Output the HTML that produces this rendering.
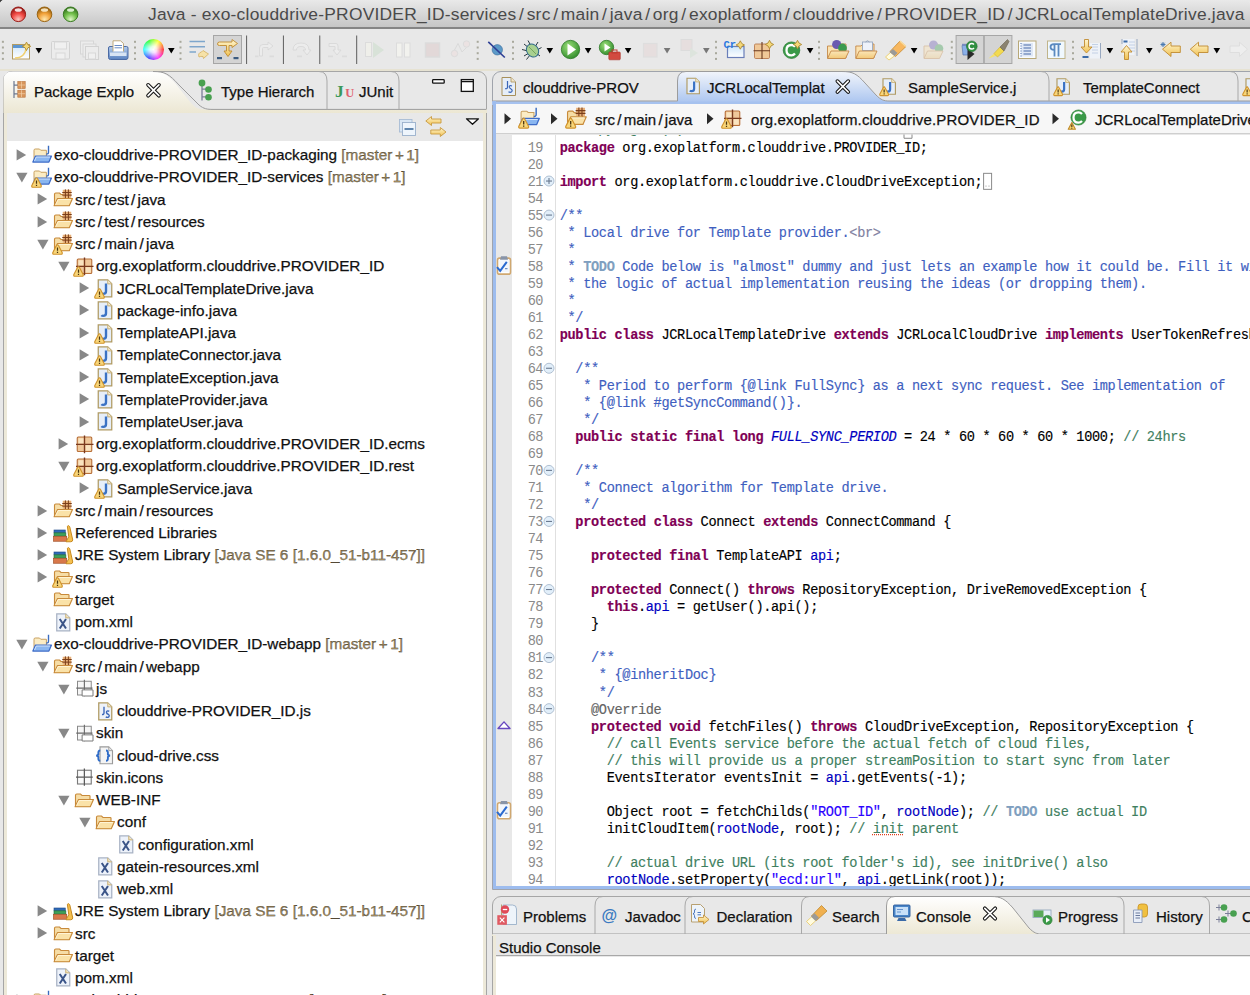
<!DOCTYPE html><html><head><meta charset="utf-8"><title>Eclipse</title><style>
*{margin:0;padding:0;box-sizing:border-box}
html,body{width:1250px;height:995px;overflow:hidden;background:#e8e8e8;font-family:"Liberation Sans",sans-serif;position:relative}
.abs{position:absolute}
svg{position:absolute;overflow:visible}
#title{left:0;top:0;width:1250px;height:29px;background:linear-gradient(#e9e9e9,#c6c6c6);border-bottom:2px solid #858585;border-radius:5px 5px 0 0}
#titletext{left:148px;top:4px;font-size:17.4px;color:#4a4a4a;white-space:nowrap;letter-spacing:0.235px}
.light{border-radius:50%}
.tree{font-size:15.3px;color:#111;-webkit-text-stroke:0.25px #111;white-space:pre;line-height:22px;height:22px}
.deco{color:#a08a5e}
.code{font-family:"Liberation Mono",monospace;font-size:13.6px;letter-spacing:-0.33px;-webkit-text-stroke:0.15px currentColor;transform:scaleY(1.08);transform-origin:0 70%;white-space:pre;color:#000;line-height:17px;height:17px}
.ln{font-family:"Liberation Mono",monospace;font-size:13.6px;letter-spacing:-0.5px;color:#8a8a8a;transform:scaleY(1.1);transform-origin:0 70%;text-align:right;width:50px;white-space:pre;line-height:17px;height:17px}
.k{color:#7f0055;font-weight:bold}
.jd{color:#3f5fbf}
.br{color:#7f7f9f}
.td{color:#7f9fbf;font-weight:bold}
.cm{color:#3f7f5f}
.st{color:#2a00ff}
.fd{color:#0000c0}
.sf{color:#0000c0;font-style:italic}
.an{color:#646464}
.sq{color:#3f7f5f;text-decoration:underline dotted #e04020}
.sl{margin:0 2.25px}
.tsl{margin:0 2.6px}
.tabt{font-size:15px;color:#111;-webkit-text-stroke:0.25px #111;white-space:nowrap;line-height:20px;transform:translateY(0.8px)}
</style></head><body><div id="title" class="abs"></div><svg style="left:0;top:0" width="100" height="29" viewBox="0 0 100 29"><defs><radialGradient id="L18" cx="0.5" cy="0.85" r="0.75"><stop offset="0" stop-color="#f8c8c0"/><stop offset="0.55" stop-color="#f24a44"/><stop offset="1" stop-color="#9a1c18"/></radialGradient></defs><circle cx="18.3" cy="14.3" r="7.3" fill="url(#L18)" stroke="#9a1c18" stroke-width="1"/><ellipse cx="18.3" cy="10.0" rx="3.6" ry="1.8" fill="#ffffff" opacity="0.85"/></svg><svg style="left:0;top:0" width="100" height="29" viewBox="0 0 100 29"><defs><radialGradient id="L44" cx="0.5" cy="0.85" r="0.75"><stop offset="0" stop-color="#fde8b0"/><stop offset="0.55" stop-color="#f2a23a"/><stop offset="1" stop-color="#9a6412"/></radialGradient></defs><circle cx="44.5" cy="14.3" r="7.3" fill="url(#L44)" stroke="#9a6412" stroke-width="1"/><ellipse cx="44.5" cy="10.0" rx="3.6" ry="1.8" fill="#fff4d8" opacity="0.85"/></svg><svg style="left:0;top:0" width="100" height="29" viewBox="0 0 100 29"><defs><radialGradient id="L70" cx="0.5" cy="0.85" r="0.75"><stop offset="0" stop-color="#e0f6c8"/><stop offset="0.55" stop-color="#72c04a"/><stop offset="1" stop-color="#3a7a22"/></radialGradient></defs><circle cx="70.6" cy="14.3" r="7.3" fill="url(#L70)" stroke="#3a7a22" stroke-width="1"/><ellipse cx="70.6" cy="10.0" rx="3.6" ry="1.8" fill="#f0ffe8" opacity="0.85"/></svg><div class="abs" style="left:0;top:0;width:3px;height:3px;background:radial-gradient(circle at 100% 100%, transparent 2.5px, #3a3a3a 3px)"></div><div id="titletext" class="abs">Java - exo-clouddrive-PROVIDER_ID-services<span class="tsl">/</span>src<span class="tsl">/</span>main<span class="tsl">/</span>java<span class="tsl">/</span>org<span class="tsl">/</span>exoplatform<span class="tsl">/</span>clouddrive<span class="tsl">/</span>PROVIDER_ID<span class="tsl">/</span>JCRLocalTemplateDrive.java</div><svg style="left:0;top:29px" width="1250" height="42" viewBox="0 29 1250 42"><defs><linearGradient id="tbw" x1="0" y1="0" x2="0" y2="1"><stop offset="0" stop-color="#cfe6fa"/><stop offset="1" stop-color="#ffffff"/></linearGradient><linearGradient id="tby" x1="0" y1="0" x2="0" y2="1"><stop offset="0" stop-color="#fff6d0"/><stop offset="1" stop-color="#f0c050"/></linearGradient><linearGradient id="tbf" x1="0" y1="0" x2="0" y2="1"><stop offset="0" stop-color="#fbe6b8"/><stop offset="1" stop-color="#f2c979"/></linearGradient><radialGradient id="tbg" cx="0.4" cy="0.35" r="0.7"><stop offset="0" stop-color="#9be07a"/><stop offset="1" stop-color="#2f8a2a"/></radialGradient><linearGradient id="tbb" x1="0" y1="0" x2="0" y2="1"><stop offset="0" stop-color="#b4ccec"/><stop offset="1" stop-color="#5a82c0"/></linearGradient></defs><rect x="1.9" y="40.8" width="2" height="2" fill="#a8a89c"/><rect x="1.9" y="46.5" width="2" height="2" fill="#a8a89c"/><rect x="1.9" y="52.2" width="2" height="2" fill="#a8a89c"/><rect x="1.9" y="57.9" width="2" height="2" fill="#a8a89c"/><rect x="134" y="40.8" width="2" height="2" fill="#a8a89c"/><rect x="134" y="46.5" width="2" height="2" fill="#a8a89c"/><rect x="134" y="52.2" width="2" height="2" fill="#a8a89c"/><rect x="134" y="57.9" width="2" height="2" fill="#a8a89c"/><rect x="179.5" y="40.8" width="2" height="2" fill="#a8a89c"/><rect x="179.5" y="46.5" width="2" height="2" fill="#a8a89c"/><rect x="179.5" y="52.2" width="2" height="2" fill="#a8a89c"/><rect x="179.5" y="57.9" width="2" height="2" fill="#a8a89c"/><rect x="476.7" y="40.8" width="2" height="2" fill="#a8a89c"/><rect x="476.7" y="46.5" width="2" height="2" fill="#a8a89c"/><rect x="476.7" y="52.2" width="2" height="2" fill="#a8a89c"/><rect x="476.7" y="57.9" width="2" height="2" fill="#a8a89c"/><rect x="512" y="40.8" width="2" height="2" fill="#a8a89c"/><rect x="512" y="46.5" width="2" height="2" fill="#a8a89c"/><rect x="512" y="52.2" width="2" height="2" fill="#a8a89c"/><rect x="512" y="57.9" width="2" height="2" fill="#a8a89c"/><rect x="715" y="40.8" width="2" height="2" fill="#a8a89c"/><rect x="715" y="46.5" width="2" height="2" fill="#a8a89c"/><rect x="715" y="52.2" width="2" height="2" fill="#a8a89c"/><rect x="715" y="57.9" width="2" height="2" fill="#a8a89c"/><rect x="818" y="40.8" width="2" height="2" fill="#a8a89c"/><rect x="818" y="46.5" width="2" height="2" fill="#a8a89c"/><rect x="818" y="52.2" width="2" height="2" fill="#a8a89c"/><rect x="818" y="57.9" width="2" height="2" fill="#a8a89c"/><rect x="950.8" y="40.8" width="2" height="2" fill="#a8a89c"/><rect x="950.8" y="46.5" width="2" height="2" fill="#a8a89c"/><rect x="950.8" y="52.2" width="2" height="2" fill="#a8a89c"/><rect x="950.8" y="57.9" width="2" height="2" fill="#a8a89c"/><rect x="1072" y="40.8" width="2" height="2" fill="#a8a89c"/><rect x="1072" y="46.5" width="2" height="2" fill="#a8a89c"/><rect x="1072" y="52.2" width="2" height="2" fill="#a8a89c"/><rect x="1072" y="57.9" width="2" height="2" fill="#a8a89c"/><rect x="246.0" y="35.5" width="1.1" height="28.5" fill="#6a6a6a"/><rect x="282.9" y="35.5" width="1.1" height="28.5" fill="#6a6a6a"/><rect x="319.2" y="35.5" width="1.1" height="28.5" fill="#6a6a6a"/><rect x="356.1" y="35.5" width="1.1" height="28.5" fill="#6a6a6a"/><rect x="12.5" y="44.5" width="17" height="14.5" fill="url(#tbw)" stroke="#b39c62" stroke-width="1"/><rect x="13" y="45" width="16" height="3" fill="#5d96d2"/><path d="M15 58 Q25 58 26.5 47" fill="none" stroke="#f0d070" stroke-width="1.6"/><path d="M26.5 42.099999999999994 Q27.34 45.459999999999994 30.7 46.3 Q27.34 47.14 26.5 50.5 Q25.66 47.14 22.3 46.3 Q25.66 45.459999999999994 26.5 42.099999999999994Z" fill="#f4d878" stroke="#b08a30" stroke-width="0.9"/><path d="M35.5 48 H42.1 L38.8 53.4 Z" fill="#000"/><rect x="51.5" y="41.5" width="18" height="17.5" rx="1" fill="#ececec" stroke="#d2d2d2"/><rect x="54.5" y="42" width="12" height="7" fill="#f0f0f0" stroke="#d8d8d8"/><rect x="56" y="53" width="9" height="6" fill="#f0f0f0" stroke="#d8d8d8"/><rect x="80.5" y="41" width="13" height="13" fill="#ececec" stroke="#d6d6d6"/><rect x="83" y="44" width="13" height="13" fill="#ececec" stroke="#d6d6d6"/><rect x="85.5" y="46.5" width="13" height="13" fill="#ececec" stroke="#d2d2d2"/><rect x="88.5" y="53" width="7" height="6" fill="#f0f0f0" stroke="#d8d8d8"/><path d="M108.5 48 Q108.5 46.5 110 46.5 H126.5 Q128 46.5 128 48 V57.5 Q128 59.5 126 59.5 H110.5 Q108.5 59.5 108.5 57.5Z" fill="url(#tbb)" stroke="#4a6aa4" stroke-width="1"/><rect x="110" y="52.5" width="16.5" height="3.5" fill="#d8e4f4"/><path d="M113 51.5 V40.8 H120.5 L123.5 43.5 V51.5" fill="#fff" stroke="#b8a070" stroke-width="0.9"/><path d="M114.5 45.5 H122 M114.5 47.8 H122" stroke="#6a8cc4" stroke-width="1"/><path d="M168 48 H174.6 L171.3 53.4 Z" fill="#000"/><path d="M189.5 41.5 H205 M189.5 46.8 H205 M189.5 52 H196" stroke="#7ea6cc" stroke-width="1.6"/><path d="M199 57 Q197.5 53 201.5 52 L203 50.5 L208.5 54 L203.5 58.5 L203 56.5 Q200.5 56 199 57Z" fill="#f6e2a8" stroke="#d4b060" stroke-width="0.8"/><rect x="213.5" y="35.5" width="28" height="28" fill="#d4d4d4" stroke="#a6a6a6" stroke-width="1"/><path d="M217.5 44 Q217.5 42 219.5 42 H232 V39.5 L237.5 43.5 L232 47.5 V45.5 H229 V51 H232 L228 56.5 L224 51 H226.5 V45.5 H219.5 Q217.5 45.5 217.5 44Z" fill="url(#tby)" stroke="#c08a30" stroke-width="0.9"/><rect x="217" y="57" width="5" height="2.2" fill="#3a5a80"/><rect x="233.5" y="57" width="5" height="2.2" fill="#3a5a80"/><path d="M259.5 56 V48 Q259.5 44.5 263 44.5 H268 V42 L273 46 L268 50 V47.5 H263.5 Q262.5 47.5 262.5 48.5 V56Z" fill="#ececec" stroke="#d8d8d8" stroke-width="0.9"/><rect x="255" y="55.5" width="3.5" height="1.8" fill="#dcdcdc"/><rect x="269.5" y="55.5" width="4.5" height="1.8" fill="#dcdcdc"/><path d="M293 50 Q293 43 301 43 Q309 43 309 50 L311 50 L307 55 L303 50 L305.5 50 Q305.5 46.5 301 46.5 Q296.5 46.5 296.5 50Z" fill="#ececec" stroke="#d8d8d8" stroke-width="0.9"/><rect x="297" y="55.5" width="5" height="1.8" fill="#dcdcdc"/><path d="M329 43.5 H336 Q338 43.5 338 46 V50 H341 L337 55 L333 50 H335 V46.5 H329Z" fill="#ececec" stroke="#d8d8d8" stroke-width="0.9"/><rect x="328" y="55.5" width="5" height="1.8" fill="#dcdcdc"/><rect x="342" y="55.5" width="5" height="1.8" fill="#dcdcdc"/><rect x="365.5" y="42.5" width="6" height="14" fill="#efefea" stroke="#dcdcdc"/><path d="M373 42 L384 50 L373 58Z" fill="#d8e2d8"/><rect x="396.5" y="43" width="5.5" height="14" fill="#f2f2ee" stroke="#dcdcdc"/><rect x="404.5" y="43" width="5.5" height="14" fill="#f2f2ee" stroke="#dcdcdc"/><rect x="425.5" y="43" width="14" height="14" fill="#e2d8d8" stroke="#dcdcdc" stroke-width="1.4"/><circle cx="454.5" cy="53.5" r="3.2" fill="#ebe2e2" stroke="#dcdcdc"/><circle cx="466.5" cy="44" r="3.2" fill="#ebe2e2" stroke="#dcdcdc"/><path d="M454.5 50 L458 43.5 L462 52 L466.5 47.5" fill="none" stroke="#dadada" stroke-width="1"/><circle cx="497.3" cy="49.8" r="5.2" fill="#5c9ac8" stroke="#3a6a9a" stroke-width="0.6"/><path d="M488.3 41.8 L504.8 57.5" stroke="#2c3e94" stroke-width="1.6"/><path d="M524 44 L529 48 M522 49.5 L528 51 M524 56 L529 53 M538 42 L535 47 M541.5 47.5 L537 50 M540 56 L536 53 M528 40.5 L531 46 M526.5 59.5 L530 55" stroke="#2a3a40" stroke-width="1"/><ellipse cx="532.5" cy="50.5" rx="5.8" ry="6.8" transform="rotate(-35 532.5 50.5)" fill="#a8d090" stroke="#2f6a8a" stroke-width="1"/><path d="M529 47 L536 54" stroke="#6a9a50" stroke-width="0.8"/><path d="M546.5 48 H553.1 L549.8 53.4 Z" fill="#000"/><circle cx="570.5" cy="49.5" r="9.2" fill="url(#tbg)" stroke="#2f7a2a" stroke-width="0.8"/><path d="M567.5 43.5 L576 49.5 L567.5 55.5Z" fill="#fff"/><path d="M584.8 48 H591.4 L588.0999999999999 53.4 Z" fill="#000"/><circle cx="606.5" cy="47.5" r="7.2" fill="url(#tbg)" stroke="#2f7a2a" stroke-width="0.8"/><path d="M604.5 43.5 L610.5 47.5 L604.5 51.5Z" fill="#fff"/><rect x="608.8" y="52" width="11.5" height="7.8" rx="1" fill="#d24a40" stroke="#a83028" stroke-width="0.6"/><rect x="612" y="50" width="5" height="3" fill="none" stroke="#c03a30" stroke-width="1"/><path d="M624.8 48 H631.4 L628.0999999999999 53.4 Z" fill="#000"/><rect x="643.5" y="43.5" width="13.5" height="13.5" fill="#e6dede" stroke="#dedede" stroke-width="1.2"/><path d="M663.8 48 H670.4 L667.0999999999999 53.4 Z" fill="#777"/><rect x="681" y="39.5" width="11" height="11" fill="#e6dede" stroke="#dcdcdc"/><path d="M690 48 L698 53 L690 58Z" fill="#dde4dd"/><path d="M703 48 H709.6 L706.3 53.4 Z" fill="#777"/><rect x="727.5" y="46.5" width="16.5" height="11" fill="url(#tbw)" stroke="#6a7eb8" stroke-width="1.2"/><text x="723.5" y="48" font-family="Liberation Mono" font-weight="bold" font-size="10.5" fill="#2a7ae0">Cr</text><path d="M740.3 40.8 Q741.14 44.16 744.5 45 Q741.14 45.84 740.3 49.2 Q739.4599999999999 45.84 736.0999999999999 45 Q739.4599999999999 44.16 740.3 40.8Z" fill="#f4d878" stroke="#b08a30" stroke-width="0.9"/><rect x="754.5" y="44" width="15" height="14.5" rx="1.2" fill="#f0c898" stroke="#b87a50" stroke-width="0.9"/><path d="M753.5 50.8 H770 M762 42 V59" stroke="#6a3a20" stroke-width="1.1"/><path d="M769.5 40.3 Q770.34 43.66 773.7 44.5 Q770.34 45.34 769.5 48.7 Q768.66 45.34 765.3 44.5 Q768.66 43.66 769.5 40.3Z" fill="#f4d878" stroke="#b08a30" stroke-width="0.9"/><circle cx="791.5" cy="50.2" r="8.3" fill="#3a9a48" stroke="#2a7a30" stroke-width="0.7"/><path d="M795 46.8 Q793.5 45 791.5 45 Q786.5 45 786.5 50.2 Q786.5 55.4 791.5 55.4 Q793.5 55.4 795 53.6" fill="none" stroke="#fff" stroke-width="2.3"/><path d="M797.5 40.3 Q798.34 43.66 801.7 44.5 Q798.34 45.34 797.5 48.7 Q796.66 45.34 793.3 44.5 Q796.66 43.66 797.5 40.3Z" fill="#f4d878" stroke="#b08a30" stroke-width="0.9"/><path d="M806.8 48 H813.4 L810.0999999999999 53.4 Z" fill="#000"/><path d="M827.5 46 H833 L835 44 H846 V58 H827.5Z" fill="#fbe2b0" stroke="#c4894a" stroke-width="0.9"/><circle cx="836.7" cy="44.5" r="4.6" fill="#6a5ab0"/><circle cx="842.5" cy="48" r="4.4" fill="#3a9a50"/><path d="M827.5 58.5 L831 51 H849 L845.5 58.5Z" fill="url(#tbf)" stroke="#c4894a" stroke-width="0.9" stroke-linejoin="round"/><path d="M855.8 46 H861 L863 44 H874 V58 H855.8Z" fill="#fbe2b0" stroke="#c4894a" stroke-width="0.9"/><rect x="862.5" y="42" width="10" height="8.5" fill="#eef2fa" stroke="#98a8c0" stroke-width="0.9"/><path d="M865.5 42 Q867.5 39.5 869.5 42" fill="none" stroke="#98a8c0"/><path d="M855.8 58.5 L859.3 51 H877 L873.5 58.5Z" fill="url(#tbf)" stroke="#c4894a" stroke-width="0.9" stroke-linejoin="round"/><path d="M885.5 57 L891 52 L895 55.5 L889 60Z" fill="#fffbe0" stroke="#e8c860" stroke-width="0.8"/><path d="M890 51.5 L900 41 L906 46.5 L895.5 56.5Z" fill="#f8b860" stroke="#c88a30" stroke-width="0.8"/><path d="M889.5 52 L893 49 L897.5 53 L894.5 56Z" fill="#9a9a98"/><path d="M900 41 L906 46.5" stroke="#f8dca0" stroke-width="1.5"/><path d="M910.8 48 H917.4 L914.0999999999999 53.4 Z" fill="#000"/><g opacity="0.38"><path d="M924 46 H929 L931 44 H938 V58 H924Z" fill="#fbe2b0" stroke="#c4894a" stroke-width="0.9"/><circle cx="933.5" cy="45" r="4.5" fill="#6a5ab0"/><circle cx="939" cy="48.5" r="4.3" fill="#3a9a50"/><path d="M924 58.5 L927.5 51 H943 L939.5 58.5Z" fill="url(#tbf)" stroke="#c4894a" stroke-width="0.9"/></g><rect x="956.1" y="35.5" width="27.600000000000023" height="28" fill="#d4d4d4" stroke="#a6a6a6" stroke-width="1"/><rect x="984.3" y="35.5" width="27.600000000000023" height="28" fill="#d4d4d4" stroke="#a6a6a6" stroke-width="1"/><path d="M962 45.5 H969 L968 55 H963Z" fill="#8ab0e8" stroke="#5a78b0" stroke-width="0.7"/><path d="M962 44.5 H970" stroke="#7a8ac0" stroke-width="1.4"/><path d="M967.5 48.5 V60 L974.5 54Z" fill="#2a2a2a"/><circle cx="971.8" cy="46.3" r="5.4" fill="#2f9040" stroke="#1f6a2a" stroke-width="0.5"/><path d="M974 44.5 Q973 43.5 971.8 43.5 Q969 43.5 969 46.3 Q969 49.1 971.8 49.1 Q973 49.1 974 48" fill="none" stroke="#fff" stroke-width="1.5"/><path d="M988.5 58.5 Q993 57 997 55.5 L994.5 53 Z" fill="#f4e070"/><path d="M994 53.5 L1000 47 L1004 51 L997.5 57Z" fill="#f2da50" stroke="#d0b030" stroke-width="0.6"/><path d="M1000 47 L1007.5 39.5 L1009 41.5 L1004 51Z" fill="#8a8270" stroke="#6a6250" stroke-width="0.6"/><rect x="1018.5" y="41" width="17.5" height="17.5" fill="#f8fbff" stroke="#b8a878" stroke-width="1"/><rect x="1021" y="43" width="12" height="13.5" fill="#dfe8f6"/><path d="M1023.5 45 H1031 M1023.5 48 H1031 M1023.5 51 H1031 M1023.5 54 H1031" stroke="#4a6aa8" stroke-width="1.2"/><path d="M1021 43 V56.5" stroke="#4a6aa8" stroke-width="1" stroke-dasharray="1 1.5"/><rect x="1047.5" y="41" width="17.5" height="17.5" fill="#f0f8fe" stroke="#c0b48a" stroke-width="1"/><path d="M1058.5 44 V56.5 M1054.5 44 V56.5 M1061 44.2 H1054 Q1050.5 44.2 1050.5 47 Q1050.5 49.8 1054 49.8" fill="none" stroke="#5a8ac0" stroke-width="1.8"/><rect x="1090" y="43" width="10.5" height="15.5" fill="#eef2f8"/><path d="M1100.5 43 V58.5" stroke="#98a8c0"/><path d="M1092 44.5 H1098 M1092 47 H1098 M1092 50 H1098 M1092 53 H1098" stroke="#b8c8e0" stroke-width="0.8"/><rect x="1082.5" y="56" width="6" height="2" fill="#3a6aa8"/><path d="M1084.5 39.5 H1088.5 V47 H1092 L1086.5 53 L1081 47 H1084.5Z" fill="url(#tby)" stroke="#c08a30" stroke-width="0.9"/><path d="M1106.6 48 H1113.1999999999998 L1109.8999999999999 53.4 Z" fill="#000"/><rect x="1122.5" y="39" width="12" height="16" fill="#eef2f8"/><path d="M1122 39 V44 M1137 39 V56" stroke="#98a8c0"/><path d="M1129 42 H1135 M1129 45 H1135 M1129 48 H1135 M1129 51 H1135" stroke="#b8c8e0" stroke-width="0.8"/><rect x="1123.5" y="40.5" width="4" height="2" fill="#3a6aa8"/><path d="M1124.5 59.5 H1128.5 V52 H1132 L1126.5 45.5 L1121 52 H1124.5Z" fill="url(#tby)" stroke="#c08a30" stroke-width="0.9"/><path d="M1146 48 H1152.6 L1149.3 53.4 Z" fill="#000"/><path d="M1180.3 46 V52.5 H1171 V56.5 L1162.5 49.2 L1171 42.2 V46Z" fill="url(#tby)" stroke="#c08a30" stroke-width="0.9" stroke-linejoin="round"/><path d="M1163 42 V47 M1160.5 44.5 H1165.5 M1161.3 42.8 L1164.7 46.2 M1164.7 42.8 L1161.3 46.2" stroke="#4a7ab0" stroke-width="1"/><path d="M1208 46 V52.5 H1198.5 V56.5 L1190.3 49.2 L1198.5 42.2 V46Z" fill="url(#tby)" stroke="#c08a30" stroke-width="0.9" stroke-linejoin="round"/><path d="M1213.5 48 H1220.1 L1216.8 53.4 Z" fill="#000"/><path d="M1230 46 V52.5 H1239.5 V56.5 L1247.5 49.2 L1239.5 42.2 V46Z" fill="#eeeeee" stroke="#dcdcdc" stroke-width="0.9" stroke-linejoin="round"/><rect x="0" y="69" width="1250" height="2" fill="#e6e2d2"/></svg><div class="abs" style="left:142.6px;top:38.8px;width:21.3px;height:21.3px;border-radius:50%;background:radial-gradient(circle,#fff 0%,rgba(255,255,255,.85) 22%,rgba(255,255,255,0) 70%),conic-gradient(from 90deg,#ff3030,#ff30ff,#4040ff,#30ffff,#30ff30,#ffff30,#ff3030)"></div><div class="abs" style="left:3px;top:71px;width:484px;height:940px;border:1px solid #a6a6a6;border-radius:9px 9px 0 0;background:#e8e8e8"></div><div class="abs" style="left:4px;top:109px;width:3px;height:900px;background:#ede9d9"></div><div class="abs" style="left:483px;top:109px;width:3px;height:900px;background:#ede9d9"></div><svg style="left:3px;top:71px" width="484" height="42" viewBox="0 0 484 42"><defs><linearGradient id="ga" x1="0" y1="0" x2="0" y2="1"><stop offset="0" stop-color="#ffffff"/><stop offset="1" stop-color="#ece7d3"/></linearGradient></defs><path d="M0.5 42 V9.5 Q0.5 0.5 9.5 0.5 H150 C160 0.5 164 3 172 12 L188 32 C193 37.5 196 38.4 202 38.4 H484 V42 Z" fill="url(#ga)"/><path d="M150 0.5 C162 0.5 166 3 176 14 L196 34 C201 38 204 38.4 210 38.4 H483" fill="none" stroke="#9c9c9c" stroke-width="1"/><path d="M324 38 V10 Q324 0.5 316 0.5 M396 38 V10 Q396 0.5 388 0.5" fill="none" stroke="#a8a8a8" stroke-width="1"/></svg><div class="abs tabt" style="left:34px;top:81px">Package Explo</div><div class="abs tabt" style="left:221px;top:81px">Type Hierarch</div><div class="abs tabt" style="left:359px;top:81px">JUnit</div><div class="abs" style="left:7px;top:141px;width:476px;height:860px;background:#fff"></div><!--LPICONS--><svg style="left:15.8px;top:148.8px" width="11" height="12" viewBox="0 0 11 12"><path d="M0.6 0.3 L10.2 5.9 L0.6 11.5 Z" fill="#888"/></svg><svg style="left:32px;top:144.6px" width="20" height="20" viewBox="0 0 16 16"><path d="M1.6 4.2 Q1.6 3.2 2.6 3.2 H6 L7 4.2 H11.5 V11 H1.6Z" fill="#fbecc4" stroke="#c8a060" stroke-width="0.8"/><path d="M0.7 13.6 L2.8 8.8 H15.6 L13.5 13.6 Z" fill="#8ab6f0" stroke="#3e6cc8" stroke-width="1" stroke-linejoin="round"/><path d="M2 12.8 L3.4 9.6 H14.4" fill="none" stroke="#cfe2fb" stroke-width="0.8"/><path d="M13.2 0.6 V5.8 Q13.2 7.4 11.4 7.2" fill="none" stroke="#3a6cc0" stroke-width="1.1"/></svg><div class="abs tree" style="left:54px;top:144.10px">exo-clouddrive-PROVIDER_ID-packaging<span class="deco"> [master<span style="margin:0 2.5px">+</span>1]</span></div><svg style="left:15.5px;top:172.14px" width="12" height="11" viewBox="0 0 12 11"><path d="M0.3 0.8 L11.5 0.8 L5.9 10.4 Z" fill="#888"/></svg><svg style="left:32px;top:166.84px" width="20" height="20" viewBox="0 0 16 16"><path d="M1.6 4.2 Q1.6 3.2 2.6 3.2 H6 L7 4.2 H11.5 V11 H1.6Z" fill="#fbecc4" stroke="#c8a060" stroke-width="0.8"/><path d="M0.7 13.6 L2.8 8.8 H15.6 L13.5 13.6 Z" fill="#8ab6f0" stroke="#3e6cc8" stroke-width="1" stroke-linejoin="round"/><path d="M2 12.8 L3.4 9.6 H14.4" fill="none" stroke="#cfe2fb" stroke-width="0.8"/><path d="M13.2 0.6 V5.8 Q13.2 7.4 11.4 7.2" fill="none" stroke="#3a6cc0" stroke-width="1.1"/><path d="M3.6 8.6 Q4.1 8.6 4.5 9.5 L7.4 15 Q7.6 16.2 6.6 16.2 H0.6 Q-0.4 16.2 -0.2 15 L2.7 9.5 Q3.1 8.6 3.6 8.6Z" fill="#f8d67a" stroke="#d0932c" stroke-width="0.9"/><path d="M3.6 10.8 V13.4" stroke="#4a3410" stroke-width="1"/><rect x="3.1" y="14.2" width="1" height="1" fill="#4a3410"/></svg><div class="abs tree" style="left:54px;top:166.34px">exo-clouddrive-PROVIDER_ID-services<span class="deco"> [master<span style="margin:0 2.5px">+</span>1]</span></div><svg style="left:36.8px;top:193.28px" width="11" height="12" viewBox="0 0 11 12"><path d="M0.6 0.3 L10.2 5.9 L0.6 11.5 Z" fill="#888"/></svg><svg style="left:53px;top:189.08px" width="20" height="20" viewBox="0 0 16 16"><path d="M1.2 4.2 Q1.2 3.2 2.2 3.2 H5.2 L6.4 4.4 H12.2 Q12.8 4.4 12.8 5 V13.2 H1.2Z" fill="#f6dda6" stroke="#c88a3a" stroke-width="0.9"/><path d="M0.9 13.4 L3.6 7.6 H15.6 L13 13.4 Z" fill="#fae2a8" stroke="#c88a3a" stroke-width="0.9" stroke-linejoin="round"/><path d="M2 12.6 L4.1 8.4 H14.3" fill="none" stroke="#fff6dc" stroke-width="0.7"/><rect x="7.8" y="0.6" width="6.8" height="6.4" fill="#e8b078"/><path d="M7.4 2.8 H15 M7.4 4.9 H15 M9.9 0.3 V7.2 M12.3 0.3 V7.2" stroke="#7a3e1a" stroke-width="0.8"/></svg><div class="abs tree" style="left:75px;top:188.58px">src<span class="sl">/</span>test<span class="sl">/</span>java</div><svg style="left:36.8px;top:215.52px" width="11" height="12" viewBox="0 0 11 12"><path d="M0.6 0.3 L10.2 5.9 L0.6 11.5 Z" fill="#888"/></svg><svg style="left:53px;top:211.32px" width="20" height="20" viewBox="0 0 16 16"><path d="M1.2 4.2 Q1.2 3.2 2.2 3.2 H5.2 L6.4 4.4 H12.2 Q12.8 4.4 12.8 5 V13.2 H1.2Z" fill="#f6dda6" stroke="#c88a3a" stroke-width="0.9"/><path d="M0.9 13.4 L3.6 7.6 H15.6 L13 13.4 Z" fill="#fae2a8" stroke="#c88a3a" stroke-width="0.9" stroke-linejoin="round"/><path d="M2 12.6 L4.1 8.4 H14.3" fill="none" stroke="#fff6dc" stroke-width="0.7"/><rect x="7.8" y="0.6" width="6.8" height="6.4" fill="#e8b078"/><path d="M7.4 2.8 H15 M7.4 4.9 H15 M9.9 0.3 V7.2 M12.3 0.3 V7.2" stroke="#7a3e1a" stroke-width="0.8"/></svg><div class="abs tree" style="left:75px;top:210.82px">src<span class="sl">/</span>test<span class="sl">/</span>resources</div><svg style="left:36.5px;top:238.86px" width="12" height="11" viewBox="0 0 12 11"><path d="M0.3 0.8 L11.5 0.8 L5.9 10.4 Z" fill="#888"/></svg><svg style="left:53px;top:233.56px" width="20" height="20" viewBox="0 0 16 16"><path d="M1.2 4.2 Q1.2 3.2 2.2 3.2 H5.2 L6.4 4.4 H12.2 Q12.8 4.4 12.8 5 V13.2 H1.2Z" fill="#f6dda6" stroke="#c88a3a" stroke-width="0.9"/><path d="M0.9 13.4 L3.6 7.6 H15.6 L13 13.4 Z" fill="#fae2a8" stroke="#c88a3a" stroke-width="0.9" stroke-linejoin="round"/><path d="M2 12.6 L4.1 8.4 H14.3" fill="none" stroke="#fff6dc" stroke-width="0.7"/><rect x="7.8" y="0.6" width="6.8" height="6.4" fill="#e8b078"/><path d="M7.4 2.8 H15 M7.4 4.9 H15 M9.9 0.3 V7.2 M12.3 0.3 V7.2" stroke="#7a3e1a" stroke-width="0.8"/><path d="M3.6 8.6 Q4.1 8.6 4.5 9.5 L7.4 15 Q7.6 16.2 6.6 16.2 H0.6 Q-0.4 16.2 -0.2 15 L2.7 9.5 Q3.1 8.6 3.6 8.6Z" fill="#f8d67a" stroke="#d0932c" stroke-width="0.9"/><path d="M3.6 10.8 V13.4" stroke="#4a3410" stroke-width="1"/><rect x="3.1" y="14.2" width="1" height="1" fill="#4a3410"/></svg><div class="abs tree" style="left:75px;top:233.06px">src<span class="sl">/</span>main<span class="sl">/</span>java</div><svg style="left:57.5px;top:261.1px" width="12" height="11" viewBox="0 0 12 11"><path d="M0.3 0.8 L11.5 0.8 L5.9 10.4 Z" fill="#888"/></svg><svg style="left:74px;top:255.8px" width="20" height="20" viewBox="0 0 16 16"><rect x="2.6" y="2.4" width="11.6" height="11.6" rx="0.8" fill="#f0c89a" stroke="#b8703a" stroke-width="0.9"/><rect x="3.6" y="3.4" width="4.2" height="4.2" fill="#fae4c0"/><rect x="9.2" y="9" width="4.2" height="4.2" fill="#fae4c0"/><path d="M1.6 8.3 H15.6 M8.4 1.2 V15.4" stroke="#7a3a1e" stroke-width="1.1"/><path d="M3.6 8.6 Q4.1 8.6 4.5 9.5 L7.4 15 Q7.6 16.2 6.6 16.2 H0.6 Q-0.4 16.2 -0.2 15 L2.7 9.5 Q3.1 8.6 3.6 8.6Z" fill="#f8d67a" stroke="#d0932c" stroke-width="0.9"/><path d="M3.6 10.8 V13.4" stroke="#4a3410" stroke-width="1"/><rect x="3.1" y="14.2" width="1" height="1" fill="#4a3410"/></svg><div class="abs tree" style="left:96px;top:255.30px">org.exoplatform.clouddrive.PROVIDER_ID</div><svg style="left:78.8px;top:282.24px" width="11" height="12" viewBox="0 0 11 12"><path d="M0.6 0.3 L10.2 5.9 L0.6 11.5 Z" fill="#888"/></svg><svg style="left:95px;top:278.04px" width="20" height="20" viewBox="0 0 16 16"><path d="M2.6 1.5 H10.2 L13.4 4.7 V15 H2.6Z" fill="#e6eef9" stroke="#b09a62" stroke-width="1"/><path d="M10.2 1.5 V4.7 H13.4" fill="#f6ecd0" stroke="#c8b078" stroke-width="0.8"/><path d="M8.8 4.4 V10.6 Q8.8 12.7 6.6 12.7 Q5.6 12.7 5.1 12.2" fill="none" stroke="#3a72c4" stroke-width="1.9"/><path d="M3.6 8.6 Q4.1 8.6 4.5 9.5 L7.4 15 Q7.6 16.2 6.6 16.2 H0.6 Q-0.4 16.2 -0.2 15 L2.7 9.5 Q3.1 8.6 3.6 8.6Z" fill="#f8d67a" stroke="#d0932c" stroke-width="0.9"/><path d="M3.6 10.8 V13.4" stroke="#4a3410" stroke-width="1"/><rect x="3.1" y="14.2" width="1" height="1" fill="#4a3410"/></svg><div class="abs tree" style="left:117px;top:277.54px">JCRLocalTemplateDrive.java</div><svg style="left:78.8px;top:304.48px" width="11" height="12" viewBox="0 0 11 12"><path d="M0.6 0.3 L10.2 5.9 L0.6 11.5 Z" fill="#888"/></svg><svg style="left:95px;top:300.28px" width="20" height="20" viewBox="0 0 16 16"><path d="M2.6 1.5 H10.2 L13.4 4.7 V15 H2.6Z" fill="#e6eef9" stroke="#b09a62" stroke-width="1"/><path d="M10.2 1.5 V4.7 H13.4" fill="#f6ecd0" stroke="#c8b078" stroke-width="0.8"/><path d="M8.8 4.4 V10.6 Q8.8 12.7 6.6 12.7 Q5.6 12.7 5.1 12.2" fill="none" stroke="#3a72c4" stroke-width="1.9"/></svg><div class="abs tree" style="left:117px;top:299.78px">package-info.java</div><svg style="left:78.8px;top:326.72px" width="11" height="12" viewBox="0 0 11 12"><path d="M0.6 0.3 L10.2 5.9 L0.6 11.5 Z" fill="#888"/></svg><svg style="left:95px;top:322.52px" width="20" height="20" viewBox="0 0 16 16"><path d="M2.6 1.5 H10.2 L13.4 4.7 V15 H2.6Z" fill="#e6eef9" stroke="#b09a62" stroke-width="1"/><path d="M10.2 1.5 V4.7 H13.4" fill="#f6ecd0" stroke="#c8b078" stroke-width="0.8"/><path d="M8.8 4.4 V10.6 Q8.8 12.7 6.6 12.7 Q5.6 12.7 5.1 12.2" fill="none" stroke="#3a72c4" stroke-width="1.9"/><path d="M3.6 8.6 Q4.1 8.6 4.5 9.5 L7.4 15 Q7.6 16.2 6.6 16.2 H0.6 Q-0.4 16.2 -0.2 15 L2.7 9.5 Q3.1 8.6 3.6 8.6Z" fill="#f8d67a" stroke="#d0932c" stroke-width="0.9"/><path d="M3.6 10.8 V13.4" stroke="#4a3410" stroke-width="1"/><rect x="3.1" y="14.2" width="1" height="1" fill="#4a3410"/></svg><div class="abs tree" style="left:117px;top:322.02px">TemplateAPI.java</div><svg style="left:78.8px;top:348.96px" width="11" height="12" viewBox="0 0 11 12"><path d="M0.6 0.3 L10.2 5.9 L0.6 11.5 Z" fill="#888"/></svg><svg style="left:95px;top:344.76px" width="20" height="20" viewBox="0 0 16 16"><path d="M2.6 1.5 H10.2 L13.4 4.7 V15 H2.6Z" fill="#e6eef9" stroke="#b09a62" stroke-width="1"/><path d="M10.2 1.5 V4.7 H13.4" fill="#f6ecd0" stroke="#c8b078" stroke-width="0.8"/><path d="M8.8 4.4 V10.6 Q8.8 12.7 6.6 12.7 Q5.6 12.7 5.1 12.2" fill="none" stroke="#3a72c4" stroke-width="1.9"/><path d="M3.6 8.6 Q4.1 8.6 4.5 9.5 L7.4 15 Q7.6 16.2 6.6 16.2 H0.6 Q-0.4 16.2 -0.2 15 L2.7 9.5 Q3.1 8.6 3.6 8.6Z" fill="#f8d67a" stroke="#d0932c" stroke-width="0.9"/><path d="M3.6 10.8 V13.4" stroke="#4a3410" stroke-width="1"/><rect x="3.1" y="14.2" width="1" height="1" fill="#4a3410"/></svg><div class="abs tree" style="left:117px;top:344.26px">TemplateConnector.java</div><svg style="left:78.8px;top:371.2px" width="11" height="12" viewBox="0 0 11 12"><path d="M0.6 0.3 L10.2 5.9 L0.6 11.5 Z" fill="#888"/></svg><svg style="left:95px;top:367.0px" width="20" height="20" viewBox="0 0 16 16"><path d="M2.6 1.5 H10.2 L13.4 4.7 V15 H2.6Z" fill="#e6eef9" stroke="#b09a62" stroke-width="1"/><path d="M10.2 1.5 V4.7 H13.4" fill="#f6ecd0" stroke="#c8b078" stroke-width="0.8"/><path d="M8.8 4.4 V10.6 Q8.8 12.7 6.6 12.7 Q5.6 12.7 5.1 12.2" fill="none" stroke="#3a72c4" stroke-width="1.9"/><path d="M3.6 8.6 Q4.1 8.6 4.5 9.5 L7.4 15 Q7.6 16.2 6.6 16.2 H0.6 Q-0.4 16.2 -0.2 15 L2.7 9.5 Q3.1 8.6 3.6 8.6Z" fill="#f8d67a" stroke="#d0932c" stroke-width="0.9"/><path d="M3.6 10.8 V13.4" stroke="#4a3410" stroke-width="1"/><rect x="3.1" y="14.2" width="1" height="1" fill="#4a3410"/></svg><div class="abs tree" style="left:117px;top:366.50px">TemplateException.java</div><svg style="left:78.8px;top:393.44px" width="11" height="12" viewBox="0 0 11 12"><path d="M0.6 0.3 L10.2 5.9 L0.6 11.5 Z" fill="#888"/></svg><svg style="left:95px;top:389.24px" width="20" height="20" viewBox="0 0 16 16"><path d="M2.6 1.5 H10.2 L13.4 4.7 V15 H2.6Z" fill="#e6eef9" stroke="#b09a62" stroke-width="1"/><path d="M10.2 1.5 V4.7 H13.4" fill="#f6ecd0" stroke="#c8b078" stroke-width="0.8"/><path d="M8.8 4.4 V10.6 Q8.8 12.7 6.6 12.7 Q5.6 12.7 5.1 12.2" fill="none" stroke="#3a72c4" stroke-width="1.9"/></svg><div class="abs tree" style="left:117px;top:388.74px">TemplateProvider.java</div><svg style="left:78.8px;top:415.68px" width="11" height="12" viewBox="0 0 11 12"><path d="M0.6 0.3 L10.2 5.9 L0.6 11.5 Z" fill="#888"/></svg><svg style="left:95px;top:411.48px" width="20" height="20" viewBox="0 0 16 16"><path d="M2.6 1.5 H10.2 L13.4 4.7 V15 H2.6Z" fill="#e6eef9" stroke="#b09a62" stroke-width="1"/><path d="M10.2 1.5 V4.7 H13.4" fill="#f6ecd0" stroke="#c8b078" stroke-width="0.8"/><path d="M8.8 4.4 V10.6 Q8.8 12.7 6.6 12.7 Q5.6 12.7 5.1 12.2" fill="none" stroke="#3a72c4" stroke-width="1.9"/></svg><div class="abs tree" style="left:117px;top:410.98px">TemplateUser.java</div><svg style="left:57.8px;top:437.92px" width="11" height="12" viewBox="0 0 11 12"><path d="M0.6 0.3 L10.2 5.9 L0.6 11.5 Z" fill="#888"/></svg><svg style="left:74px;top:433.72px" width="20" height="20" viewBox="0 0 16 16"><rect x="2.6" y="2.4" width="11.6" height="11.6" rx="0.8" fill="#f0c89a" stroke="#b8703a" stroke-width="0.9"/><rect x="3.6" y="3.4" width="4.2" height="4.2" fill="#fae4c0"/><rect x="9.2" y="9" width="4.2" height="4.2" fill="#fae4c0"/><path d="M1.6 8.3 H15.6 M8.4 1.2 V15.4" stroke="#7a3a1e" stroke-width="1.1"/></svg><div class="abs tree" style="left:96px;top:433.22px">org.exoplatform.clouddrive.PROVIDER_ID.ecms</div><svg style="left:57.5px;top:461.26px" width="12" height="11" viewBox="0 0 12 11"><path d="M0.3 0.8 L11.5 0.8 L5.9 10.4 Z" fill="#888"/></svg><svg style="left:74px;top:455.96px" width="20" height="20" viewBox="0 0 16 16"><rect x="2.6" y="2.4" width="11.6" height="11.6" rx="0.8" fill="#f0c89a" stroke="#b8703a" stroke-width="0.9"/><rect x="3.6" y="3.4" width="4.2" height="4.2" fill="#fae4c0"/><rect x="9.2" y="9" width="4.2" height="4.2" fill="#fae4c0"/><path d="M1.6 8.3 H15.6 M8.4 1.2 V15.4" stroke="#7a3a1e" stroke-width="1.1"/><path d="M3.6 8.6 Q4.1 8.6 4.5 9.5 L7.4 15 Q7.6 16.2 6.6 16.2 H0.6 Q-0.4 16.2 -0.2 15 L2.7 9.5 Q3.1 8.6 3.6 8.6Z" fill="#f8d67a" stroke="#d0932c" stroke-width="0.9"/><path d="M3.6 10.8 V13.4" stroke="#4a3410" stroke-width="1"/><rect x="3.1" y="14.2" width="1" height="1" fill="#4a3410"/></svg><div class="abs tree" style="left:96px;top:455.46px">org.exoplatform.clouddrive.PROVIDER_ID.rest</div><svg style="left:78.8px;top:482.4px" width="11" height="12" viewBox="0 0 11 12"><path d="M0.6 0.3 L10.2 5.9 L0.6 11.5 Z" fill="#888"/></svg><svg style="left:95px;top:478.2px" width="20" height="20" viewBox="0 0 16 16"><path d="M2.6 1.5 H10.2 L13.4 4.7 V15 H2.6Z" fill="#e6eef9" stroke="#b09a62" stroke-width="1"/><path d="M10.2 1.5 V4.7 H13.4" fill="#f6ecd0" stroke="#c8b078" stroke-width="0.8"/><path d="M8.8 4.4 V10.6 Q8.8 12.7 6.6 12.7 Q5.6 12.7 5.1 12.2" fill="none" stroke="#3a72c4" stroke-width="1.9"/><path d="M3.6 8.6 Q4.1 8.6 4.5 9.5 L7.4 15 Q7.6 16.2 6.6 16.2 H0.6 Q-0.4 16.2 -0.2 15 L2.7 9.5 Q3.1 8.6 3.6 8.6Z" fill="#f8d67a" stroke="#d0932c" stroke-width="0.9"/><path d="M3.6 10.8 V13.4" stroke="#4a3410" stroke-width="1"/><rect x="3.1" y="14.2" width="1" height="1" fill="#4a3410"/></svg><div class="abs tree" style="left:117px;top:477.70px">SampleService.java</div><svg style="left:36.8px;top:504.64px" width="11" height="12" viewBox="0 0 11 12"><path d="M0.6 0.3 L10.2 5.9 L0.6 11.5 Z" fill="#888"/></svg><svg style="left:53px;top:500.44px" width="20" height="20" viewBox="0 0 16 16"><path d="M1.2 4.2 Q1.2 3.2 2.2 3.2 H5.2 L6.4 4.4 H12.2 Q12.8 4.4 12.8 5 V13.2 H1.2Z" fill="#f6dda6" stroke="#c88a3a" stroke-width="0.9"/><path d="M0.9 13.4 L3.6 7.6 H15.6 L13 13.4 Z" fill="#fae2a8" stroke="#c88a3a" stroke-width="0.9" stroke-linejoin="round"/><path d="M2 12.6 L4.1 8.4 H14.3" fill="none" stroke="#fff6dc" stroke-width="0.7"/><rect x="7.8" y="0.6" width="6.8" height="6.4" fill="#e8b078"/><path d="M7.4 2.8 H15 M7.4 4.9 H15 M9.9 0.3 V7.2 M12.3 0.3 V7.2" stroke="#7a3e1a" stroke-width="0.8"/></svg><div class="abs tree" style="left:75px;top:499.94px">src<span class="sl">/</span>main<span class="sl">/</span>resources</div><svg style="left:36.8px;top:526.88px" width="11" height="12" viewBox="0 0 11 12"><path d="M0.6 0.3 L10.2 5.9 L0.6 11.5 Z" fill="#888"/></svg><svg style="left:53px;top:522.68px" width="20" height="20" viewBox="0 0 16 16"><rect x="0.8" y="5.6" width="9" height="2.2" fill="#2e6ab8" stroke="#1e4a88" stroke-width="0.5"/><rect x="0.8" y="7.9" width="9.5" height="2.6" fill="#3ea05a" stroke="#207038" stroke-width="0.5"/><rect x="0.4" y="10.6" width="10.6" height="4" fill="#d8784a" stroke="#9a4a20" stroke-width="0.5"/><path d="M11.5 2.6 Q12.6 1.4 13.4 3 L15.8 13.6 Q15.6 15 14.2 15 L10.4 15 L12.6 11 Z" fill="#f4c050" stroke="#c88a20" stroke-width="0.8"/></svg><div class="abs tree" style="left:75px;top:522.18px">Referenced Libraries</div><svg style="left:36.8px;top:549.12px" width="11" height="12" viewBox="0 0 11 12"><path d="M0.6 0.3 L10.2 5.9 L0.6 11.5 Z" fill="#888"/></svg><svg style="left:53px;top:544.92px" width="20" height="20" viewBox="0 0 16 16"><rect x="0.8" y="5.6" width="9" height="2.2" fill="#2e6ab8" stroke="#1e4a88" stroke-width="0.5"/><rect x="0.8" y="7.9" width="9.5" height="2.6" fill="#3ea05a" stroke="#207038" stroke-width="0.5"/><rect x="0.4" y="10.6" width="10.6" height="4" fill="#d8784a" stroke="#9a4a20" stroke-width="0.5"/><path d="M11.5 2.6 Q12.6 1.4 13.4 3 L15.8 13.6 Q15.6 15 14.2 15 L10.4 15 L12.6 11 Z" fill="#f4c050" stroke="#c88a20" stroke-width="0.8"/></svg><div class="abs tree" style="left:75px;top:544.42px">JRE System Library<span class="deco"> [Java SE 6 [1.6.0_51-b11-457]]</span></div><svg style="left:36.8px;top:571.36px" width="11" height="12" viewBox="0 0 11 12"><path d="M0.6 0.3 L10.2 5.9 L0.6 11.5 Z" fill="#888"/></svg><svg style="left:53px;top:567.16px" width="20" height="20" viewBox="0 0 16 16"><path d="M1.2 4.2 Q1.2 3.2 2.2 3.2 H5.2 L6.4 4.4 H12.2 Q12.8 4.4 12.8 5 V13.2 H1.2Z" fill="#f6dda6" stroke="#c88a3a" stroke-width="0.9"/><path d="M0.9 13.4 L3.6 7.6 H15.6 L13 13.4 Z" fill="#fae2a8" stroke="#c88a3a" stroke-width="0.9" stroke-linejoin="round"/><path d="M2 12.6 L4.1 8.4 H14.3" fill="none" stroke="#fff6dc" stroke-width="0.7"/><path d="M3.6 8.6 Q4.1 8.6 4.5 9.5 L7.4 15 Q7.6 16.2 6.6 16.2 H0.6 Q-0.4 16.2 -0.2 15 L2.7 9.5 Q3.1 8.6 3.6 8.6Z" fill="#f8d67a" stroke="#d0932c" stroke-width="0.9"/><path d="M3.6 10.8 V13.4" stroke="#4a3410" stroke-width="1"/><rect x="3.1" y="14.2" width="1" height="1" fill="#4a3410"/></svg><div class="abs tree" style="left:75px;top:566.66px">src</div><svg style="left:53px;top:589.4px" width="20" height="20" viewBox="0 0 16 16"><path d="M1.2 4.2 Q1.2 3.2 2.2 3.2 H5.2 L6.4 4.4 H12.2 Q12.8 4.4 12.8 5 V13.2 H1.2Z" fill="#f6dda6" stroke="#c88a3a" stroke-width="0.9"/><path d="M0.9 13.4 L3.6 7.6 H15.6 L13 13.4 Z" fill="#fae2a8" stroke="#c88a3a" stroke-width="0.9" stroke-linejoin="round"/><path d="M2 12.6 L4.1 8.4 H14.3" fill="none" stroke="#fff6dc" stroke-width="0.7"/></svg><div class="abs tree" style="left:75px;top:588.90px">target</div><svg style="left:53px;top:611.64px" width="20" height="20" viewBox="0 0 16 16"><path d="M3 1.5 H10.2 L13.4 4.7 V15 H3Z" fill="#edf2fa" stroke="#a8b2c4" stroke-width="1"/><path d="M10.2 1.5 V4.7 H13.4" fill="#f4e6c0" stroke="#c8b078" stroke-width="0.8"/><path d="M5.4 5.6 L10.4 13.2 M10.4 5.6 L5.4 13.2" stroke="#3a5488" stroke-width="1.6"/></svg><div class="abs tree" style="left:75px;top:611.14px">pom.xml</div><svg style="left:15.5px;top:639.18px" width="12" height="11" viewBox="0 0 12 11"><path d="M0.3 0.8 L11.5 0.8 L5.9 10.4 Z" fill="#888"/></svg><svg style="left:32px;top:633.88px" width="20" height="20" viewBox="0 0 16 16"><path d="M1.6 4.2 Q1.6 3.2 2.6 3.2 H6 L7 4.2 H11.5 V11 H1.6Z" fill="#fbecc4" stroke="#c8a060" stroke-width="0.8"/><path d="M0.7 13.6 L2.8 8.8 H15.6 L13.5 13.6 Z" fill="#8ab6f0" stroke="#3e6cc8" stroke-width="1" stroke-linejoin="round"/><path d="M2 12.8 L3.4 9.6 H14.4" fill="none" stroke="#cfe2fb" stroke-width="0.8"/><path d="M13.2 0.6 V5.8 Q13.2 7.4 11.4 7.2" fill="none" stroke="#3a6cc0" stroke-width="1.1"/></svg><div class="abs tree" style="left:54px;top:633.38px">exo-clouddrive-PROVIDER_ID-webapp<span class="deco"> [master<span style="margin:0 2.5px">+</span>1]</span></div><svg style="left:36.5px;top:661.42px" width="12" height="11" viewBox="0 0 12 11"><path d="M0.3 0.8 L11.5 0.8 L5.9 10.4 Z" fill="#888"/></svg><svg style="left:53px;top:656.12px" width="20" height="20" viewBox="0 0 16 16"><path d="M1.2 4.2 Q1.2 3.2 2.2 3.2 H5.2 L6.4 4.4 H12.2 Q12.8 4.4 12.8 5 V13.2 H1.2Z" fill="#f6dda6" stroke="#c88a3a" stroke-width="0.9"/><path d="M0.9 13.4 L3.6 7.6 H15.6 L13 13.4 Z" fill="#fae2a8" stroke="#c88a3a" stroke-width="0.9" stroke-linejoin="round"/><path d="M2 12.6 L4.1 8.4 H14.3" fill="none" stroke="#fff6dc" stroke-width="0.7"/><rect x="7.8" y="0.6" width="6.8" height="6.4" fill="#e8b078"/><path d="M7.4 2.8 H15 M7.4 4.9 H15 M9.9 0.3 V7.2 M12.3 0.3 V7.2" stroke="#7a3e1a" stroke-width="0.8"/></svg><div class="abs tree" style="left:75px;top:655.62px">src<span class="sl">/</span>main<span class="sl">/</span>webapp</div><svg style="left:57.5px;top:683.66px" width="12" height="11" viewBox="0 0 12 11"><path d="M0.3 0.8 L11.5 0.8 L5.9 10.4 Z" fill="#888"/></svg><svg style="left:74px;top:678.36px" width="20" height="20" viewBox="0 0 16 16"><rect x="2.8" y="2.6" width="11" height="11" fill="#f6f6f6" stroke="#8a8a8a" stroke-width="0.8"/><path d="M1.8 8.1 H14.8 M8.3 1.4 V14.6" stroke="#6a6a6a" stroke-width="0.9"/><path d="M6.5 9.5 H15.2 V14.4 H6.5Z" fill="#fff" stroke="#7a7a7a" stroke-width="0.8"/></svg><div class="abs tree" style="left:96px;top:677.86px">js</div><svg style="left:95px;top:700.6px" width="20" height="20" viewBox="0 0 16 16"><path d="M3 1.5 H10.2 L13.4 4.7 V15 H3Z" fill="#eef2f8" stroke="#b09a62" stroke-width="1"/><path d="M10.2 1.5 V4.7 H13.4" fill="#f2e6c8" stroke="#c8b078" stroke-width="0.8"/><path d="M7.2 4.6 V9.4 Q7.2 11 5.6 10.8 M11.4 8.2 Q9 7.4 9.2 9.2 Q9.4 10.2 10.6 10.6 Q11.9 11.3 11 12.7 Q10 13.5 8.6 12.7" fill="none" stroke="#3a66b8" stroke-width="1.1"/></svg><div class="abs tree" style="left:117px;top:700.10px">clouddrive-PROVIDER_ID.js</div><svg style="left:57.5px;top:728.14px" width="12" height="11" viewBox="0 0 12 11"><path d="M0.3 0.8 L11.5 0.8 L5.9 10.4 Z" fill="#888"/></svg><svg style="left:74px;top:722.84px" width="20" height="20" viewBox="0 0 16 16"><rect x="2.8" y="2.6" width="11" height="11" fill="#f6f6f6" stroke="#8a8a8a" stroke-width="0.8"/><path d="M1.8 8.1 H14.8 M8.3 1.4 V14.6" stroke="#6a6a6a" stroke-width="0.9"/><path d="M6.5 9.5 H15.2 V14.4 H6.5Z" fill="#fff" stroke="#7a7a7a" stroke-width="0.8"/></svg><div class="abs tree" style="left:96px;top:722.34px">skin</div><svg style="left:95px;top:745.08px" width="20" height="20" viewBox="0 0 16 16"><path d="M4 1.5 H11 L14 4.5 V15 H4Z" fill="#f4f4f4" stroke="#9a9a9a" stroke-width="0.9"/><path d="M11 1.5 V4.5 H14" fill="#e8e8e8" stroke="#9a9a9a" stroke-width="0.7"/><path d="M4.2 4.4 Q2.4 4.4 2.7 6.8 Q2.9 8.2 1 8.5 Q2.9 8.8 2.7 10.2 Q2.4 12.6 4.2 12.6 M8.8 4.4 Q10.6 4.4 10.3 6.8 Q10.1 8.2 12 8.5 Q10.1 8.8 10.3 10.2 Q10.6 12.6 8.8 12.6" fill="none" stroke="#2f6cc8" stroke-width="1.5"/></svg><div class="abs tree" style="left:117px;top:744.58px">cloud-drive.css</div><svg style="left:74px;top:767.32px" width="20" height="20" viewBox="0 0 16 16"><rect x="2.8" y="2.6" width="11" height="11" fill="#fafafa" stroke="#7a7a7a" stroke-width="0.9"/><path d="M1.6 8.1 H15 M8.3 1.2 V15" stroke="#5a5a5a" stroke-width="1"/></svg><div class="abs tree" style="left:96px;top:766.82px">skin.icons</div><svg style="left:57.5px;top:794.86px" width="12" height="11" viewBox="0 0 12 11"><path d="M0.3 0.8 L11.5 0.8 L5.9 10.4 Z" fill="#888"/></svg><svg style="left:74px;top:789.56px" width="20" height="20" viewBox="0 0 16 16"><path d="M1.2 4.2 Q1.2 3.2 2.2 3.2 H5.2 L6.4 4.4 H12.2 Q12.8 4.4 12.8 5 V13.2 H1.2Z" fill="#f6dda6" stroke="#c88a3a" stroke-width="0.9"/><path d="M0.9 13.4 L3.6 7.6 H15.6 L13 13.4 Z" fill="#fae2a8" stroke="#c88a3a" stroke-width="0.9" stroke-linejoin="round"/><path d="M2 12.6 L4.1 8.4 H14.3" fill="none" stroke="#fff6dc" stroke-width="0.7"/></svg><div class="abs tree" style="left:96px;top:789.06px">WEB-INF</div><svg style="left:78.5px;top:817.1px" width="12" height="11" viewBox="0 0 12 11"><path d="M0.3 0.8 L11.5 0.8 L5.9 10.4 Z" fill="#888"/></svg><svg style="left:95px;top:811.8px" width="20" height="20" viewBox="0 0 16 16"><path d="M1.2 4.2 Q1.2 3.2 2.2 3.2 H5.2 L6.4 4.4 H12.2 Q12.8 4.4 12.8 5 V13.2 H1.2Z" fill="#f6dda6" stroke="#c88a3a" stroke-width="0.9"/><path d="M0.9 13.4 L3.6 7.6 H15.6 L13 13.4 Z" fill="#fae2a8" stroke="#c88a3a" stroke-width="0.9" stroke-linejoin="round"/><path d="M2 12.6 L4.1 8.4 H14.3" fill="none" stroke="#fff6dc" stroke-width="0.7"/></svg><div class="abs tree" style="left:117px;top:811.30px">conf</div><svg style="left:116px;top:834.04px" width="20" height="20" viewBox="0 0 16 16"><path d="M3 1.5 H10.2 L13.4 4.7 V15 H3Z" fill="#edf2fa" stroke="#a8b2c4" stroke-width="1"/><path d="M10.2 1.5 V4.7 H13.4" fill="#f4e6c0" stroke="#c8b078" stroke-width="0.8"/><path d="M5.4 5.6 L10.4 13.2 M10.4 5.6 L5.4 13.2" stroke="#3a5488" stroke-width="1.6"/></svg><div class="abs tree" style="left:138px;top:833.54px">configuration.xml</div><svg style="left:95px;top:856.28px" width="20" height="20" viewBox="0 0 16 16"><path d="M3 1.5 H10.2 L13.4 4.7 V15 H3Z" fill="#edf2fa" stroke="#a8b2c4" stroke-width="1"/><path d="M10.2 1.5 V4.7 H13.4" fill="#f4e6c0" stroke="#c8b078" stroke-width="0.8"/><path d="M5.4 5.6 L10.4 13.2 M10.4 5.6 L5.4 13.2" stroke="#3a5488" stroke-width="1.6"/></svg><div class="abs tree" style="left:117px;top:855.78px">gatein-resources.xml</div><svg style="left:95px;top:878.52px" width="20" height="20" viewBox="0 0 16 16"><path d="M3 1.5 H10.2 L13.4 4.7 V15 H3Z" fill="#edf2fa" stroke="#a8b2c4" stroke-width="1"/><path d="M10.2 1.5 V4.7 H13.4" fill="#f4e6c0" stroke="#c8b078" stroke-width="0.8"/><path d="M5.4 5.6 L10.4 13.2 M10.4 5.6 L5.4 13.2" stroke="#3a5488" stroke-width="1.6"/></svg><div class="abs tree" style="left:117px;top:878.02px">web.xml</div><svg style="left:36.8px;top:904.96px" width="11" height="12" viewBox="0 0 11 12"><path d="M0.6 0.3 L10.2 5.9 L0.6 11.5 Z" fill="#888"/></svg><svg style="left:53px;top:900.76px" width="20" height="20" viewBox="0 0 16 16"><rect x="0.8" y="5.6" width="9" height="2.2" fill="#2e6ab8" stroke="#1e4a88" stroke-width="0.5"/><rect x="0.8" y="7.9" width="9.5" height="2.6" fill="#3ea05a" stroke="#207038" stroke-width="0.5"/><rect x="0.4" y="10.6" width="10.6" height="4" fill="#d8784a" stroke="#9a4a20" stroke-width="0.5"/><path d="M11.5 2.6 Q12.6 1.4 13.4 3 L15.8 13.6 Q15.6 15 14.2 15 L10.4 15 L12.6 11 Z" fill="#f4c050" stroke="#c88a20" stroke-width="0.8"/></svg><div class="abs tree" style="left:75px;top:900.26px">JRE System Library<span class="deco"> [Java SE 6 [1.6.0_51-b11-457]]</span></div><svg style="left:36.8px;top:927.2px" width="11" height="12" viewBox="0 0 11 12"><path d="M0.6 0.3 L10.2 5.9 L0.6 11.5 Z" fill="#888"/></svg><svg style="left:53px;top:923.0px" width="20" height="20" viewBox="0 0 16 16"><path d="M1.2 4.2 Q1.2 3.2 2.2 3.2 H5.2 L6.4 4.4 H12.2 Q12.8 4.4 12.8 5 V13.2 H1.2Z" fill="#f6dda6" stroke="#c88a3a" stroke-width="0.9"/><path d="M0.9 13.4 L3.6 7.6 H15.6 L13 13.4 Z" fill="#fae2a8" stroke="#c88a3a" stroke-width="0.9" stroke-linejoin="round"/><path d="M2 12.6 L4.1 8.4 H14.3" fill="none" stroke="#fff6dc" stroke-width="0.7"/></svg><div class="abs tree" style="left:75px;top:922.50px">src</div><svg style="left:53px;top:945.24px" width="20" height="20" viewBox="0 0 16 16"><path d="M1.2 4.2 Q1.2 3.2 2.2 3.2 H5.2 L6.4 4.4 H12.2 Q12.8 4.4 12.8 5 V13.2 H1.2Z" fill="#f6dda6" stroke="#c88a3a" stroke-width="0.9"/><path d="M0.9 13.4 L3.6 7.6 H15.6 L13 13.4 Z" fill="#fae2a8" stroke="#c88a3a" stroke-width="0.9" stroke-linejoin="round"/><path d="M2 12.6 L4.1 8.4 H14.3" fill="none" stroke="#fff6dc" stroke-width="0.7"/></svg><div class="abs tree" style="left:75px;top:944.74px">target</div><svg style="left:53px;top:967.48px" width="20" height="20" viewBox="0 0 16 16"><path d="M3 1.5 H10.2 L13.4 4.7 V15 H3Z" fill="#edf2fa" stroke="#a8b2c4" stroke-width="1"/><path d="M10.2 1.5 V4.7 H13.4" fill="#f4e6c0" stroke="#c8b078" stroke-width="0.8"/><path d="M5.4 5.6 L10.4 13.2 M10.4 5.6 L5.4 13.2" stroke="#3a5488" stroke-width="1.6"/></svg><div class="abs tree" style="left:75px;top:966.98px">pom.xml</div><svg style="left:15.8px;top:993.92px" width="11" height="12" viewBox="0 0 11 12"><path d="M0.6 0.3 L10.2 5.9 L0.6 11.5 Z" fill="#888"/></svg><svg style="left:32px;top:989.72px" width="20" height="20" viewBox="0 0 16 16"><path d="M1.6 4.2 Q1.6 3.2 2.6 3.2 H6 L7 4.2 H11.5 V11 H1.6Z" fill="#fbecc4" stroke="#c8a060" stroke-width="0.8"/><path d="M0.7 13.6 L2.8 8.8 H15.6 L13.5 13.6 Z" fill="#8ab6f0" stroke="#3e6cc8" stroke-width="1" stroke-linejoin="round"/><path d="M2 12.8 L3.4 9.6 H14.4" fill="none" stroke="#cfe2fb" stroke-width="0.8"/><path d="M13.2 0.6 V5.8 Q13.2 7.4 11.4 7.2" fill="none" stroke="#3a6cc0" stroke-width="1.1"/><path d="M3.6 8.6 Q4.1 8.6 4.5 9.5 L7.4 15 Q7.6 16.2 6.6 16.2 H0.6 Q-0.4 16.2 -0.2 15 L2.7 9.5 Q3.1 8.6 3.6 8.6Z" fill="#f8d67a" stroke="#d0932c" stroke-width="0.9"/><path d="M3.6 10.8 V13.4" stroke="#4a3410" stroke-width="1"/><rect x="3.1" y="14.2" width="1" height="1" fill="#4a3410"/></svg><div class="abs tree" style="left:54px;top:989.22px">exo-clouddrive-PROVIDER_ID-some<span class="deco"> [master<span style="margin:0 2.5px">+</span>1]</span></div><div class="abs" style="left:492px;top:71px;width:800px;height:819px;border:1px solid #a0a4ac;border-radius:9px 0 0 0;background:#e8e8e8"></div><svg style="left:492px;top:71px" width="758" height="34" viewBox="0 0 758 34"><defs><linearGradient id="gb" x1="0" y1="0" x2="0" y2="1"><stop offset="0" stop-color="#f2f5fb"/><stop offset="1" stop-color="#a6c2ef"/></linearGradient></defs><path d="M185 30.5 V10 Q185 0.5 194 0.5 H350 C361 0.5 365 3 373 12 L384 24 C389 29 392 30 397 30 H758 V34 H0 V30 Z" fill="url(#gb)"/><rect x="0" y="30.5" width="758" height="3.5" fill="#a6c2ef"/><path d="M0.5 30 H185.5 V10 Q185.5 0.5 194 0.5 H350 C361 0.5 365 3 373 12 L384 24 C389 29 392 30 397 30 H758" fill="none" stroke="#9c9c9c" stroke-width="1"/><path d="M557 30 V10 Q557 0.5 549 0.5 M746 30 V10 Q746 0.5 738 0.5" fill="none" stroke="#a8a8a8" stroke-width="1"/></svg><div class="abs tabt" style="left:523px;top:77px">clouddrive-PROV</div><div class="abs tabt" style="left:707px;top:77px">JCRLocalTemplat</div><div class="abs tabt" style="left:908px;top:77px">SampleService.j</div><div class="abs tabt" style="left:1083px;top:77px">TemplateConnect</div><div class="abs" style="left:493px;top:101px;width:3px;height:788px;background:#9dbcee"></div><div class="abs" style="left:493px;top:886px;width:760px;height:3px;background:#9dbcee"></div><div class="abs" style="left:496px;top:104px;width:760px;height:30px;background:#f7f7f7;border-bottom:1px solid #cfcfcf"></div><div class="abs tabt" style="left:595px;top:109px">src<span class="sl">/</span>main<span class="sl">/</span>java</div><div class="abs tabt" style="left:751px;top:109px;letter-spacing:0.16px">org.exoplatform.clouddrive.PROVIDER_ID</div><div class="abs tabt" style="left:1095px;top:109px">JCRLocalTemplateDrive</div><div class="abs" style="left:496px;top:135px;width:16px;height:751px;background:#e8e8e8"></div><div class="abs" style="left:512px;top:135px;width:44px;height:751px;background:#fff;border-right:1px solid #e0e0e0"></div><div class="abs" style="left:556px;top:135px;width:700px;height:751px;background:#fff"></div><div class="abs" style="left:496px;top:135px;width:760px;height:751px;overflow:hidden"><div class="abs code" style="left:63px;top:-13.52px"><span class="cm">/* Copyright (C) 2003-2014 eXo Platform SAS.</span></div><div class="abs ln" style="left:-3px;top:4.70px">19</div><div class="abs code" style="left:63.7px;top:4.70px"><span class="k">package</span> org.exoplatform.clouddrive.PROVIDER_ID;</div><div class="abs ln" style="left:-3px;top:21.72px">20</div><div class="abs code" style="left:63.7px;top:21.72px"></div><div class="abs ln" style="left:-3px;top:38.75px">21</div><div class="abs code" style="left:63.7px;top:38.75px"><span class="k">import</span> org.exoplatform.clouddrive.CloudDriveException;</div><div class="abs ln" style="left:-3px;top:55.77px">54</div><div class="abs code" style="left:63.7px;top:55.77px"></div><div class="abs ln" style="left:-3px;top:72.80px">55</div><div class="abs code" style="left:63.7px;top:72.80px"><span class="jd">/**</span></div><div class="abs ln" style="left:-3px;top:89.83px">56</div><div class="abs code" style="left:63.7px;top:89.83px"><span class="jd"> * Local drive for Template provider.</span><span class="br">&lt;br&gt;</span></div><div class="abs ln" style="left:-3px;top:106.85px">57</div><div class="abs code" style="left:63.7px;top:106.85px"><span class="jd"> *</span></div><div class="abs ln" style="left:-3px;top:123.87px">58</div><div class="abs code" style="left:63.7px;top:123.87px"><span class="jd"> * </span><span class="td">TODO</span><span class="jd"> Code below is &quot;almost&quot; dummy and just lets an example how it could be. Fill it with</span></div><div class="abs ln" style="left:-3px;top:140.90px">59</div><div class="abs code" style="left:63.7px;top:140.90px"><span class="jd"> * the logic of actual implementation reusing the ideas (or dropping them).</span></div><div class="abs ln" style="left:-3px;top:157.92px">60</div><div class="abs code" style="left:63.7px;top:157.92px"><span class="jd"> *</span></div><div class="abs ln" style="left:-3px;top:174.95px">61</div><div class="abs code" style="left:63.7px;top:174.95px"><span class="jd"> */</span></div><div class="abs ln" style="left:-3px;top:191.97px">62</div><div class="abs code" style="left:63.7px;top:191.97px"><span class="k">public</span> <span class="k">class</span> JCRLocalTemplateDrive <span class="k">extends</span> JCRLocalCloudDrive <span class="k">implements</span> UserTokenRefreshListener {</div><div class="abs ln" style="left:-3px;top:209.00px">63</div><div class="abs code" style="left:63.7px;top:209.00px"></div><div class="abs ln" style="left:-3px;top:226.02px">64</div><div class="abs code" style="left:63.7px;top:226.02px">  <span class="jd">/**</span></div><div class="abs ln" style="left:-3px;top:243.05px">65</div><div class="abs code" style="left:63.7px;top:243.05px"><span class="jd">   * Period to perform {@link FullSync} as a next sync request. See implementation of</span></div><div class="abs ln" style="left:-3px;top:260.07px">66</div><div class="abs code" style="left:63.7px;top:260.07px"><span class="jd">   * {@link #getSyncCommand()}.</span></div><div class="abs ln" style="left:-3px;top:277.10px">67</div><div class="abs code" style="left:63.7px;top:277.10px"><span class="jd">   */</span></div><div class="abs ln" style="left:-3px;top:294.12px">68</div><div class="abs code" style="left:63.7px;top:294.12px">  <span class="k">public</span> <span class="k">static</span> <span class="k">final</span> <span class="k">long</span> <span class="sf">FULL_SYNC_PERIOD</span> = 24 * 60 * 60 * 60 * 1000; <span class="cm">// 24hrs</span></div><div class="abs ln" style="left:-3px;top:311.15px">69</div><div class="abs code" style="left:63.7px;top:311.15px"></div><div class="abs ln" style="left:-3px;top:328.17px">70</div><div class="abs code" style="left:63.7px;top:328.17px">  <span class="jd">/**</span></div><div class="abs ln" style="left:-3px;top:345.20px">71</div><div class="abs code" style="left:63.7px;top:345.20px"><span class="jd">   * Connect algorithm for Template drive.</span></div><div class="abs ln" style="left:-3px;top:362.22px">72</div><div class="abs code" style="left:63.7px;top:362.22px"><span class="jd">   */</span></div><div class="abs ln" style="left:-3px;top:379.25px">73</div><div class="abs code" style="left:63.7px;top:379.25px">  <span class="k">protected</span> <span class="k">class</span> Connect <span class="k">extends</span> ConnectCommand {</div><div class="abs ln" style="left:-3px;top:396.27px">74</div><div class="abs code" style="left:63.7px;top:396.27px"></div><div class="abs ln" style="left:-3px;top:413.30px">75</div><div class="abs code" style="left:63.7px;top:413.30px">    <span class="k">protected</span> <span class="k">final</span> TemplateAPI <span class="fd">api</span>;</div><div class="abs ln" style="left:-3px;top:430.32px">76</div><div class="abs code" style="left:63.7px;top:430.32px"></div><div class="abs ln" style="left:-3px;top:447.35px">77</div><div class="abs code" style="left:63.7px;top:447.35px">    <span class="k">protected</span> Connect() <span class="k">throws</span> RepositoryException, DriveRemovedException {</div><div class="abs ln" style="left:-3px;top:464.37px">78</div><div class="abs code" style="left:63.7px;top:464.37px">      <span class="k">this</span>.<span class="fd">api</span> = getUser().api();</div><div class="abs ln" style="left:-3px;top:481.40px">79</div><div class="abs code" style="left:63.7px;top:481.40px">    }</div><div class="abs ln" style="left:-3px;top:498.42px">80</div><div class="abs code" style="left:63.7px;top:498.42px"></div><div class="abs ln" style="left:-3px;top:515.45px">81</div><div class="abs code" style="left:63.7px;top:515.45px">    <span class="jd">/**</span></div><div class="abs ln" style="left:-3px;top:532.48px">82</div><div class="abs code" style="left:63.7px;top:532.48px"><span class="jd">     * {@inheritDoc}</span></div><div class="abs ln" style="left:-3px;top:549.50px">83</div><div class="abs code" style="left:63.7px;top:549.50px"><span class="jd">     */</span></div><div class="abs ln" style="left:-3px;top:566.52px">84</div><div class="abs code" style="left:63.7px;top:566.52px">    <span class="an">@Override</span></div><div class="abs ln" style="left:-3px;top:583.55px">85</div><div class="abs code" style="left:63.7px;top:583.55px">    <span class="k">protected</span> <span class="k">void</span> fetchFiles() <span class="k">throws</span> CloudDriveException, RepositoryException {</div><div class="abs ln" style="left:-3px;top:600.58px">86</div><div class="abs code" style="left:63.7px;top:600.58px">      <span class="cm">// call Events service before the actual fetch of cloud files,</span></div><div class="abs ln" style="left:-3px;top:617.60px">87</div><div class="abs code" style="left:63.7px;top:617.60px">      <span class="cm">// this will provide us a proper streamPosition to start sync from later</span></div><div class="abs ln" style="left:-3px;top:634.62px">88</div><div class="abs code" style="left:63.7px;top:634.62px">      EventsIterator eventsInit = <span class="fd">api</span>.getEvents(-1);</div><div class="abs ln" style="left:-3px;top:651.65px">89</div><div class="abs code" style="left:63.7px;top:651.65px"></div><div class="abs ln" style="left:-3px;top:668.67px">90</div><div class="abs code" style="left:63.7px;top:668.67px">      Object root = fetchChilds(<span class="st">&quot;ROOT_ID&quot;</span>, <span class="fd">rootNode</span>); <span class="cm">// </span><span class="td">TODO</span><span class="cm"> use actual ID</span></div><div class="abs ln" style="left:-3px;top:685.70px">91</div><div class="abs code" style="left:63.7px;top:685.70px">      initCloudItem(<span class="fd">rootNode</span>, root); <span class="cm">// </span><span class="sq">init</span><span class="cm"> parent</span></div><div class="abs ln" style="left:-3px;top:702.73px">92</div><div class="abs code" style="left:63.7px;top:702.73px"></div><div class="abs ln" style="left:-3px;top:719.75px">93</div><div class="abs code" style="left:63.7px;top:719.75px">      <span class="cm">// actual drive URL (its root folder&#x27;s id), see initDrive() also</span></div><div class="abs ln" style="left:-3px;top:736.77px">94</div><div class="abs code" style="left:63.7px;top:736.77px">      <span class="fd">rootNode</span>.setProperty(<span class="st">&quot;ecd:url&quot;</span>, <span class="fd">api</span>.getLink(root));</div><div class="abs ln" style="left:-3px;top:753.80px">95</div><div class="abs code" style="left:63.7px;top:753.80px">      <span class="k">if</span> (root != null) {</div></div><div class="abs" style="left:492px;top:896px;width:800px;height:120px;border:1px solid #a6a6a6;border-radius:9px 0 0 0;background:#e8e8e8"></div><svg style="left:492px;top:896px" width="758" height="40" viewBox="0 0 758 40"><defs><linearGradient id="gc" x1="0" y1="0" x2="0" y2="1"><stop offset="0" stop-color="#ffffff"/><stop offset="1" stop-color="#ece7d3"/></linearGradient></defs><path d="M394 38 V10 Q394 0.5 403 0.5 H499 C509 0.5 513 3 521 12 L537 32 C542 37 545 38 549 38 H758 V40 H0 V38 Z" fill="url(#gc)"/><path d="M0.5 38 H394.5 V10 Q394.5 0.5 403 0.5 H499 C509 0.5 513 3 521 12 L537 32 C542 37 545 38 549 38 H758" fill="none" stroke="#9c9c9c" stroke-width="1"/><path d="M103 38 V10 Q103 0.5 111 0.5 M193 38 V10 Q193 0.5 201 0.5 M309.5 38 V10 Q309.5 0.5 317.5 0.5 M632 38 V10 Q632 0.5 624 0.5 M717.5 38 V10 Q717.5 0.5 709.5 0.5" fill="none" stroke="#a8a8a8" stroke-width="1"/></svg><div class="abs tabt" style="left:523px;top:906px">Problems</div><div class="abs tabt" style="left:625px;top:906px">Javadoc</div><div class="abs tabt" style="left:716.5px;top:906px">Declaration</div><div class="abs tabt" style="left:832px;top:906px">Search</div><div class="abs tabt" style="left:916px;top:906px">Console</div><div class="abs tabt" style="left:1058px;top:906px">Progress</div><div class="abs tabt" style="left:1156px;top:906px">History</div><div class="abs tabt" style="left:1242px;top:906px">Console</div><div class="abs" style="left:493px;top:934px;width:760px;height:22px;background:#e8e8e8;border-bottom:1px solid #a8a8a8"></div><div class="abs tabt" style="left:499px;top:936.5px">Studio Console</div><div class="abs" style="left:496px;top:957px;width:760px;height:40px;background:#fff"></div><div class="abs" style="left:493px;top:935px;width:3px;height:62px;background:#ede9d9"></div><svg style="left:0;top:0" width="1250" height="995" viewBox="0 0 1250 995"><defs><linearGradient id="uy" x1="0" y1="0" x2="0" y2="1"><stop offset="0" stop-color="#fff6d0"/><stop offset="1" stop-color="#f0c050"/></linearGradient><linearGradient id="ub" x1="0" y1="0" x2="0" y2="1"><stop offset="0" stop-color="#eaf4fc"/><stop offset="1" stop-color="#c4dcf4"/></linearGradient></defs><path d="M14 81 V98 M14 85.2 H18 M14 93.8 H18" stroke="#6c7890" stroke-width="1.2"/><rect x="17.8" y="81.5" width="7.4" height="7" fill="#d8955a" stroke="#b8703a" stroke-width="0.6"/><rect x="17.8" y="90.2" width="7.4" height="7" fill="#d8955a" stroke="#b8703a" stroke-width="0.6"/><path d="M21.5 81.5 V88.5 M17.8 85 H25.2 M21.5 90.2 V97.2 M17.8 93.7 H25.2" stroke="#f4d0a8" stroke-width="0.7"/><path d="M148.1 84.89999999999999 L158.9 95.7 M158.9 84.89999999999999 L148.1 95.7" stroke="#151515" stroke-width="3.8" stroke-linecap="round"/><path d="M148.1 84.89999999999999 L158.9 95.7 M158.9 84.89999999999999 L148.1 95.7" stroke="#fff" stroke-width="1.7" stroke-linecap="round"/><path d="M202 84 V100.5 M202 89.2 H207 M202 96.8 H207" stroke="#7a7f98" stroke-width="1.3"/><circle cx="202" cy="83" r="3.4" fill="#48a050"/><circle cx="208.5" cy="89.5" r="3.3" fill="#48a050"/><circle cx="208.5" cy="97.2" r="3.3" fill="#48a050"/><text x="335" y="97" font-family="Liberation Serif" font-weight="bold" font-size="17.5" fill="#3a985a">J</text><text x="345.3" y="97" font-family="Liberation Serif" font-weight="bold" font-size="13.5" textLength="9" lengthAdjust="spacingAndGlyphs" fill="#e0606e">U</text><rect x="432.6" y="79.6" width="11.6" height="3.6" rx="0.8" fill="#fff" stroke="#111" stroke-width="1.3"/><rect x="461.3" y="79.6" width="12" height="11.8" fill="#fff" stroke="#111" stroke-width="1.3"/><path d="M461.3 81.6 H473.3" stroke="#111" stroke-width="1.3"/><rect x="399.5" y="119.5" width="12.5" height="12.5" fill="#d8e6f4" stroke="#a8bcd4" stroke-width="0.9"/><rect x="402.5" y="122.5" width="13" height="13" fill="#eef5fc" stroke="#9ab0cc" stroke-width="0.9"/><path d="M404.5 129 H413.5" stroke="#3a6a9a" stroke-width="1.6"/><path d="M425.8 121 L431.5 116.5 V119 H441 V123 H431.5 V125.5Z" fill="url(#uy)" stroke="#c89a40" stroke-width="0.9" stroke-linejoin="round"/><path d="M446 132 L440.3 127.5 V130 H430.8 V134 H440.3 V136.5Z" fill="url(#uy)" stroke="#c89a40" stroke-width="0.9" stroke-linejoin="round"/><path d="M466.5 118.8 H478.5 L472.5 124.3Z" fill="#fff" stroke="#111" stroke-width="1.3" stroke-linejoin="round"/><path d="M502 77.5 H511 L515.5 82 V95.5 H502Z" fill="#e6eef8" stroke="#a8905a" stroke-width="1"/><path d="M511 77.5 V82 H515.5" fill="#f2e6c8" stroke="#a8905a" stroke-width="0.8"/><path d="M507.5 81 V87 Q507.5 89 505 88.7 M512 86 Q509 85 509.3 87.2 Q509.6 88.5 511 89 Q512.8 90 511.7 91.7 Q510.5 93 508.5 91.8" fill="none" stroke="#3a66b8" stroke-width="1.2"/><g transform="translate(684 76.5) scale(1.15)"><path d="M2.6 1.5 H10.2 L13.4 4.7 V15 H2.6Z" fill="#e6eef9" stroke="#b09a62" stroke-width="1"/><path d="M10.2 1.5 V4.7 H13.4" fill="#f6ecd0" stroke="#c8b078" stroke-width="0.8"/><path d="M8.8 4.4 V10.6 Q8.8 12.7 6.6 12.7 Q5.6 12.7 5.1 12.2" fill="none" stroke="#3a72c4" stroke-width="1.9"/></g><path d="M837.4 81.19999999999999 L848.1999999999999 92.0 M848.1999999999999 81.19999999999999 L837.4 92.0" stroke="#151515" stroke-width="3.8" stroke-linecap="round"/><path d="M837.4 81.19999999999999 L848.1999999999999 92.0 M848.1999999999999 81.19999999999999 L837.4 92.0" stroke="#fff" stroke-width="1.7" stroke-linecap="round"/><g transform="translate(880 77) scale(1.15)"><path d="M2.6 1.5 H10.2 L13.4 4.7 V15 H2.6Z" fill="#e6eef9" stroke="#b09a62" stroke-width="1"/><path d="M10.2 1.5 V4.7 H13.4" fill="#f6ecd0" stroke="#c8b078" stroke-width="0.8"/><path d="M8.8 4.4 V10.6 Q8.8 12.7 6.6 12.7 Q5.6 12.7 5.1 12.2" fill="none" stroke="#3a72c4" stroke-width="1.9"/><path d="M3.6 8.6 Q4.1 8.6 4.5 9.5 L7.4 15 Q7.6 16.2 6.6 16.2 H0.6 Q-0.4 16.2 -0.2 15 L2.7 9.5 Q3.1 8.6 3.6 8.6Z" fill="#f8d67a" stroke="#d0932c" stroke-width="0.9"/><path d="M3.6 10.8 V13.4" stroke="#4a3410" stroke-width="1"/><rect x="3.1" y="14.2" width="1" height="1" fill="#4a3410"/></g><g transform="translate(1054 77) scale(1.15)"><path d="M2.6 1.5 H10.2 L13.4 4.7 V15 H2.6Z" fill="#e6eef9" stroke="#b09a62" stroke-width="1"/><path d="M10.2 1.5 V4.7 H13.4" fill="#f6ecd0" stroke="#c8b078" stroke-width="0.8"/><path d="M8.8 4.4 V10.6 Q8.8 12.7 6.6 12.7 Q5.6 12.7 5.1 12.2" fill="none" stroke="#3a72c4" stroke-width="1.9"/><path d="M3.6 8.6 Q4.1 8.6 4.5 9.5 L7.4 15 Q7.6 16.2 6.6 16.2 H0.6 Q-0.4 16.2 -0.2 15 L2.7 9.5 Q3.1 8.6 3.6 8.6Z" fill="#f8d67a" stroke="#d0932c" stroke-width="0.9"/><path d="M3.6 10.8 V13.4" stroke="#4a3410" stroke-width="1"/><rect x="3.1" y="14.2" width="1" height="1" fill="#4a3410"/></g><g transform="translate(1243 77) scale(1.15)"><path d="M2.6 1.5 H10.2 L13.4 4.7 V15 H2.6Z" fill="#e6eef9" stroke="#b09a62" stroke-width="1"/><path d="M10.2 1.5 V4.7 H13.4" fill="#f6ecd0" stroke="#c8b078" stroke-width="0.8"/><path d="M8.8 4.4 V10.6 Q8.8 12.7 6.6 12.7 Q5.6 12.7 5.1 12.2" fill="none" stroke="#3a72c4" stroke-width="1.9"/><path d="M3.6 8.6 Q4.1 8.6 4.5 9.5 L7.4 15 Q7.6 16.2 6.6 16.2 H0.6 Q-0.4 16.2 -0.2 15 L2.7 9.5 Q3.1 8.6 3.6 8.6Z" fill="#f8d67a" stroke="#d0932c" stroke-width="0.9"/><path d="M3.6 10.8 V13.4" stroke="#4a3410" stroke-width="1"/><rect x="3.1" y="14.2" width="1" height="1" fill="#4a3410"/></g><path d="M504.5 113.3 L511.0 118.8 L504.5 124.3Z" fill="#2a2a2a"/><path d="M551 113.3 L557.5 118.8 L551 124.3Z" fill="#2a2a2a"/><path d="M707 113.3 L713.5 118.8 L707 124.3Z" fill="#2a2a2a"/><path d="M1052.5 113.3 L1059.0 118.8 L1052.5 124.3Z" fill="#2a2a2a"/><g transform="translate(519 107) scale(1.3)"><path d="M1.6 4.2 Q1.6 3.2 2.6 3.2 H6 L7 4.2 H11.5 V11 H1.6Z" fill="#fbecc4" stroke="#c8a060" stroke-width="0.8"/><path d="M0.7 13.6 L2.8 8.8 H15.6 L13.5 13.6 Z" fill="#8ab6f0" stroke="#3e6cc8" stroke-width="1" stroke-linejoin="round"/><path d="M2 12.8 L3.4 9.6 H14.4" fill="none" stroke="#cfe2fb" stroke-width="0.8"/><path d="M13.2 0.6 V5.8 Q13.2 7.4 11.4 7.2" fill="none" stroke="#3a6cc0" stroke-width="1.1"/><path d="M3.6 8.6 Q4.1 8.6 4.5 9.5 L7.4 15 Q7.6 16.2 6.6 16.2 H0.6 Q-0.4 16.2 -0.2 15 L2.7 9.5 Q3.1 8.6 3.6 8.6Z" fill="#f8d67a" stroke="#d0932c" stroke-width="0.9"/><path d="M3.6 10.8 V13.4" stroke="#4a3410" stroke-width="1"/><rect x="3.1" y="14.2" width="1" height="1" fill="#4a3410"/></g><g transform="translate(566 107) scale(1.3)"><path d="M1.2 4.2 Q1.2 3.2 2.2 3.2 H5.2 L6.4 4.4 H12.2 Q12.8 4.4 12.8 5 V13.2 H1.2Z" fill="#f6dda6" stroke="#c88a3a" stroke-width="0.9"/><path d="M0.9 13.4 L3.6 7.6 H15.6 L13 13.4 Z" fill="#fae2a8" stroke="#c88a3a" stroke-width="0.9" stroke-linejoin="round"/><path d="M2 12.6 L4.1 8.4 H14.3" fill="none" stroke="#fff6dc" stroke-width="0.7"/><rect x="7.8" y="0.6" width="6.8" height="6.4" fill="#e8b078"/><path d="M7.4 2.8 H15 M7.4 4.9 H15 M9.9 0.3 V7.2 M12.3 0.3 V7.2" stroke="#7a3e1a" stroke-width="0.8"/><path d="M3.6 8.6 Q4.1 8.6 4.5 9.5 L7.4 15 Q7.6 16.2 6.6 16.2 H0.6 Q-0.4 16.2 -0.2 15 L2.7 9.5 Q3.1 8.6 3.6 8.6Z" fill="#f8d67a" stroke="#d0932c" stroke-width="0.9"/><path d="M3.6 10.8 V13.4" stroke="#4a3410" stroke-width="1"/><rect x="3.1" y="14.2" width="1" height="1" fill="#4a3410"/></g><g transform="translate(722 108) scale(1.25)"><rect x="2.6" y="2.4" width="11.6" height="11.6" rx="0.8" fill="#f0c89a" stroke="#b8703a" stroke-width="0.9"/><rect x="3.6" y="3.4" width="4.2" height="4.2" fill="#fae4c0"/><rect x="9.2" y="9" width="4.2" height="4.2" fill="#fae4c0"/><path d="M1.6 8.3 H15.6 M8.4 1.2 V15.4" stroke="#7a3a1e" stroke-width="1.1"/><path d="M3.6 8.6 Q4.1 8.6 4.5 9.5 L7.4 15 Q7.6 16.2 6.6 16.2 H0.6 Q-0.4 16.2 -0.2 15 L2.7 9.5 Q3.1 8.6 3.6 8.6Z" fill="#f8d67a" stroke="#d0932c" stroke-width="0.9"/><path d="M3.6 10.8 V13.4" stroke="#4a3410" stroke-width="1"/><rect x="3.1" y="14.2" width="1" height="1" fill="#4a3410"/></g><circle cx="1078.5" cy="117.5" r="7.6" fill="#3a9a48" stroke="#2a7a30" stroke-width="0.6"/><path d="M1082 114 Q1080.5 112.3 1078.5 112.3 Q1073.5 112.3 1073.5 117.5 Q1073.5 122.7 1078.5 122.7 Q1080.5 122.7 1082 121" fill="none" stroke="#fff" stroke-width="2.2"/><g transform="translate(1068 111) scale(1.2)"><path d="M3.2 9.6 L6.2 15.2 H0.2 Z" fill="#f6d36a" stroke="#c08a2a" stroke-width="0.9" stroke-linejoin="round"/><path d="M3.2 11.3 V13.3" stroke="#3a2a10" stroke-width="0.9"/><circle cx="3.2" cy="14.3" r="0.45" fill="#3a2a10"/></g><circle cx="549" cy="181.04" r="5" fill="#e2effa" stroke="#b0c0d2" stroke-width="1"/><path d="M546 181.04 H552" stroke="#6a7a90" stroke-width="1.1"/><path d="M549 178.04 V184.04" stroke="#6a7a90" stroke-width="1.1"/><circle cx="549" cy="215.07999999999998" r="5" fill="#e2effa" stroke="#b0c0d2" stroke-width="1"/><path d="M546 215.07999999999998 H552" stroke="#6a7a90" stroke-width="1.1"/><circle cx="549" cy="368.26" r="5" fill="#e2effa" stroke="#b0c0d2" stroke-width="1"/><path d="M546 368.26 H552" stroke="#6a7a90" stroke-width="1.1"/><circle cx="549" cy="470.38" r="5" fill="#e2effa" stroke="#b0c0d2" stroke-width="1"/><path d="M546 470.38 H552" stroke="#6a7a90" stroke-width="1.1"/><circle cx="549" cy="521.44" r="5" fill="#e2effa" stroke="#b0c0d2" stroke-width="1"/><path d="M546 521.44 H552" stroke="#6a7a90" stroke-width="1.1"/><circle cx="549" cy="589.52" r="5" fill="#e2effa" stroke="#b0c0d2" stroke-width="1"/><path d="M546 589.52 H552" stroke="#6a7a90" stroke-width="1.1"/><circle cx="549" cy="657.5999999999999" r="5" fill="#e2effa" stroke="#b0c0d2" stroke-width="1"/><path d="M546 657.5999999999999 H552" stroke="#6a7a90" stroke-width="1.1"/><circle cx="549" cy="708.66" r="5" fill="#e2effa" stroke="#b0c0d2" stroke-width="1"/><path d="M546 708.66 H552" stroke="#6a7a90" stroke-width="1.1"/><rect x="497.5" y="258.14" width="13" height="16" rx="2" fill="#fff" stroke="#d0a870" stroke-width="1.6"/><rect x="499.5" y="260.14" width="9.5" height="12" fill="#f2f6fc"/><path d="M501 256.34 H507 L508 259.64 H500Z" fill="#8894a8"/><path d="M497 267.14 L500.2 270.94 L506.8 261.94" fill="none" stroke="#2a6ad0" stroke-width="2"/><path d="M505 268.64 H507.5" stroke="#6a8ac0" stroke-width="1.2"/><rect x="497.5" y="802.78" width="13" height="16" rx="2" fill="#fff" stroke="#d0a870" stroke-width="1.6"/><rect x="499.5" y="804.78" width="9.5" height="12" fill="#f2f6fc"/><path d="M501 800.98 H507 L508 804.28 H500Z" fill="#8894a8"/><path d="M497 811.78 L500.2 815.5799999999999 L506.8 806.5799999999999" fill="none" stroke="#2a6ad0" stroke-width="2"/><path d="M505 813.28 H507.5" stroke="#6a8ac0" stroke-width="1.2"/><path d="M504 721.88 L510 728.4799999999999 H498Z" fill="#fff" stroke="#6848c0" stroke-width="1.4" stroke-linejoin="round"/><rect x="983.6" y="173.34" width="8" height="16" fill="#fff" stroke="#8a8a8a" stroke-width="1"/><circle cx="986" cy="186.04" r="0.5" fill="#777"/><circle cx="989" cy="186.04" r="0.5" fill="#777"/><path d="M904 134.5 V138.28 H912 V134.5" fill="none" stroke="#8a8a8a" stroke-width="1"/><path d="M503 905 H512.5 Q516.5 905 516.5 909 V924.5 H503Z" fill="#eef4fa" stroke="#9ab0c8" stroke-width="0.9"/><path d="M501.5 904.5 V915" stroke="#b8a070" stroke-width="1"/><circle cx="505" cy="909.5" r="4.2" fill="#e04a58"/><path d="M502.8 909.5 H507.2" stroke="#fff" stroke-width="1.3"/><rect x="497.3" y="915.2" width="9.6" height="9.6" fill="#e05a62"/><path d="M499.8 917.7 L504.4 922.3 M504.4 917.7 L499.8 922.3" stroke="#fff" stroke-width="1.1"/><text x="601.5" y="920.5" font-family="Liberation Sans" font-weight="bold" font-size="16" fill="#3a7ac0">@</text><path d="M691.5 904.5 H700.5 L704.5 908.5 V922 H691.5Z" fill="#eef4fa" stroke="#b8a070" stroke-width="1"/><path d="M696 909 Q694 909 694.5 912 Q694.5 913.5 693 913.8 Q694.5 914.2 694.5 915.5 Q694 918.5 696 918.5" fill="none" stroke="#3a6ab8" stroke-width="0.9"/><path d="M697.5 912.5 H701 M697.5 914.8 H701" stroke="#3a6ab8" stroke-width="0.9"/><path d="M698.5 917.5 H703.5 V915 L709 919.5 L703.5 924 V921.5 H698.5Z" fill="url(#uy)" stroke="#c08a30" stroke-width="0.8" stroke-linejoin="round"/><path d="M806.5 921.5 L812.5 916 L816.5 920 L810.5 925.5Z" fill="#fffbe0" stroke="#e8c860" stroke-width="0.8"/><path d="M811.5 916 L821.5 905.5 L827 911 L816.5 920.5Z" fill="#f0b050" stroke="#c08a30" stroke-width="0.8"/><path d="M811 916.5 L814.5 913.2 L819 917.7 L815.5 921Z" fill="#9a9a98"/><rect x="893.5" y="905" width="16.5" height="12" rx="1" fill="#4a86c8" stroke="#2a5a9a" stroke-width="0.9"/><rect x="895.5" y="907" width="12.5" height="8" fill="#c8e0f8"/><path d="M897 909.5 H903 M897 912 H901" stroke="#5a8ac8" stroke-width="0.9"/><path d="M898.5 918 H905 L906.5 921 H897Z" fill="#3a6aa8"/><path d="M984.8 908.3 L995.2 918.7 M995.2 908.3 L984.8 918.7" stroke="#151515" stroke-width="3.8" stroke-linecap="round"/><path d="M984.8 908.3 L995.2 918.7 M995.2 908.3 L984.8 918.7" stroke="#fff" stroke-width="1.7" stroke-linecap="round"/><rect x="1033" y="910" width="18" height="7.5" fill="#e8f0f8" stroke="#8aa0b8" stroke-width="0.8"/><rect x="1033.5" y="910.5" width="10" height="6.5" fill="#5aaa5a"/><circle cx="1047.5" cy="920" r="4.6" fill="#3a9a48" stroke="#2a7a30" stroke-width="0.6"/><path d="M1046 917.3 L1050 920 L1046 922.7Z" fill="#fff"/><rect x="1138" y="904" width="9.5" height="13" rx="3" fill="#f0c040" stroke="#c89020" stroke-width="0.8"/><path d="M1133.5 910 H1142 V922.5 H1133.5Z" fill="#e8eef8" stroke="#8a9ab8" stroke-width="0.9"/><path d="M1135.5 913 H1140 M1135.5 915.5 H1140 M1135.5 918 H1140" stroke="#5a6a90" stroke-width="0.9"/><path d="M1216 907.5 H1222 M1216 919.5 H1222 M1225 913.5 H1231 M1219 904.5 V910.5 M1219 916.5 V922.5 M1228 910.5 V916.5" stroke="#7a7f98" stroke-width="1"/><circle cx="1224" cy="907.5" r="3.3" fill="#48a050"/><circle cx="1224" cy="919.5" r="3.3" fill="#48a050"/><circle cx="1233.5" cy="913.5" r="3.3" fill="#48a050"/></svg></body></html>
